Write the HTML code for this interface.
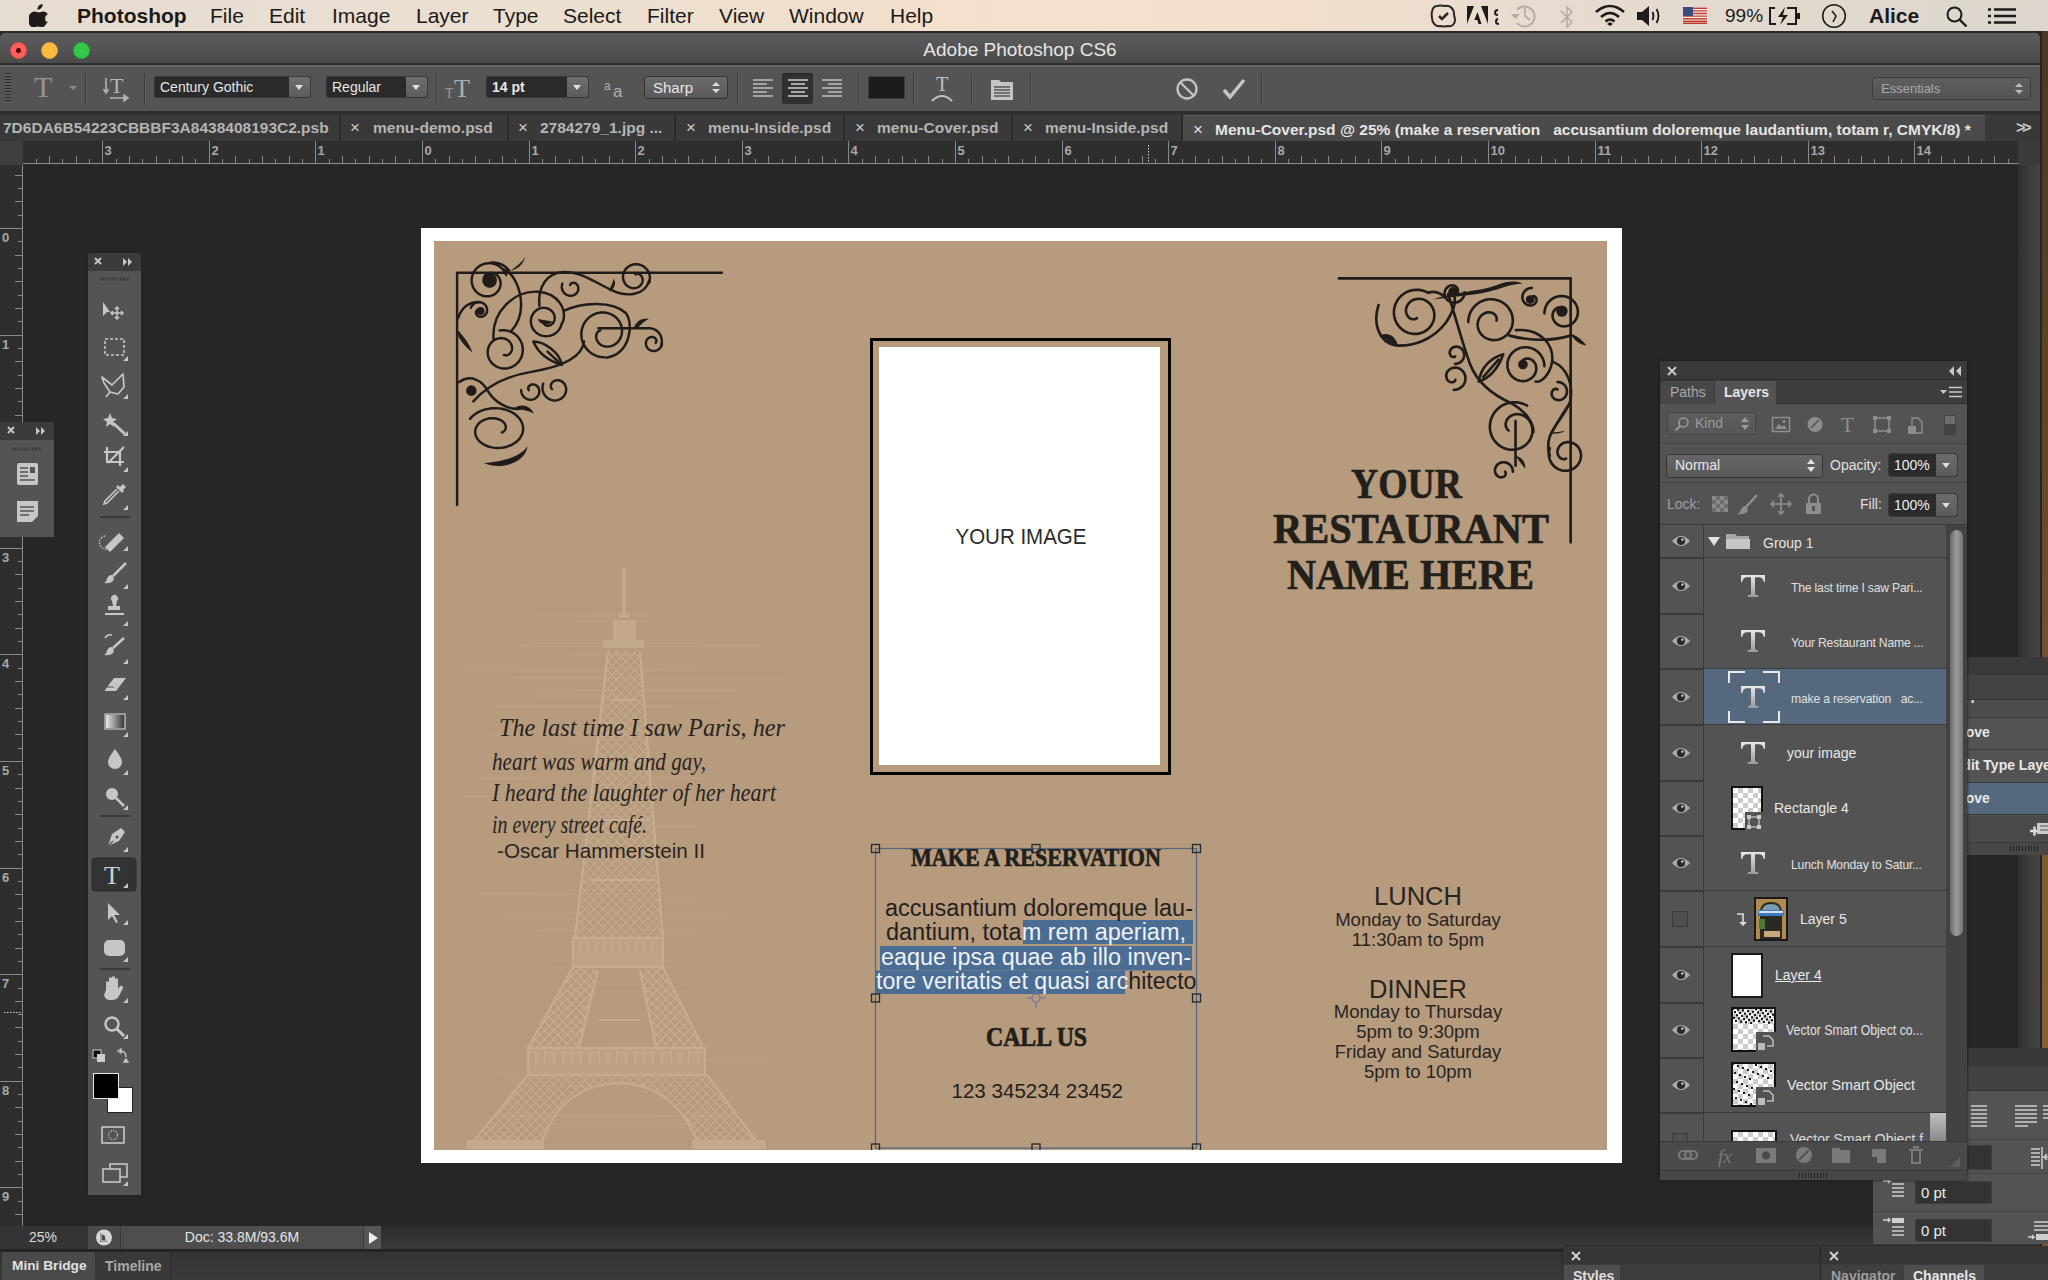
<!DOCTYPE html>
<html><head><meta charset="utf-8">
<style>
*{margin:0;padding:0;box-sizing:border-box}
html,body{width:2048px;height:1280px;overflow:hidden;background:#262626;font-family:"Liberation Sans",sans-serif}
.a{position:absolute}
#menubar{left:0;top:0;width:2048px;height:33px;background:linear-gradient(90deg,#e5dcd2 0%,#ebdfd1 25%,#f4e0cc 50%,#f3dfcc 62%,#e6dcd0 76%,#dcd6ce 100%);border-bottom:2px solid #2a2826}
#menubar span{position:absolute;top:4px;font-size:21px;color:#1c1a18;white-space:nowrap}
#titlebar{left:0;top:33px;width:2040px;height:31px;background:linear-gradient(#5d5d5d,#4a4a4a);border-top-left-radius:5px;border-top-right-radius:5px}
#optbar{left:0;top:63px;width:2040px;height:50px;background:#545454;border-top:2px solid #2c2c2c;border-bottom:2px solid #2e2e2e;box-shadow:inset 0 2px 0 #646464}
.sep{position:absolute;top:8px;width:2px;height:32px;border-left:1px solid #3c3c3c;border-right:1px solid #5e5e5e}
.fld{position:absolute;top:11px;height:22px;background:#2a2a2a;border:1px solid #3a3a3a;border-radius:2px;color:#e6e6e6;font-size:14px;line-height:20px;padding-left:5px;white-space:nowrap}
.fld .btn{position:absolute;right:0;top:0;width:21px;height:20px;background:linear-gradient(#6e6e6e,#5c5c5c);border-radius:0 2px 2px 0}
.fld .btn:after{content:"";position:absolute;left:6px;top:8px;border-left:4px solid transparent;border-right:4px solid transparent;border-top:5px solid #e0e0e0}
.ico{position:absolute}
#tabbar{left:0;top:113px;width:2040px;height:28px;background:#393939;border-top:1px solid #2a2a2a}
.tab{position:absolute;top:0;height:27px;background:#393939;border-right:2px solid #2a2a2a;color:#b4b4b4;font-weight:bold;font-size:15.5px;line-height:27px;white-space:nowrap;overflow:hidden}
.tab i{font-style:normal;position:absolute;top:0;font-weight:normal;font-size:17px;color:#c8c8c8}
#hruler{left:0;top:141px;width:2018px;height:24px;background:#2f2f2f}
#vruler{left:0;top:165px;width:23px;height:1061px;background:#2f2f2f}
#rightstrip{left:2018px;top:141px;width:22px;height:1110px;background:#3a3a3a}
#wood{left:2041px;top:31px;width:7px;height:1249px;background:linear-gradient(#4a3824,#5e4429 30%,#7a5631 60%,#8a6236 85%);border-left:1px solid #2a2018}
#statusbar{left:0;top:1226px;width:2040px;height:23px;background:linear-gradient(#2c2c2c,#363636)}
#bottombar{left:0;top:1249px;width:2040px;height:31px;background:linear-gradient(#333,#3a3a3a);border-top:3px solid #242424}
</style></head><body>
<div id="menubar" class="a">
<svg class="a" style="left:29px;top:4px" width="20" height="23" viewBox="0 0 20 23"><path d="M13.6 0c.2 1.6-.5 3.1-1.4 4.1-.9 1-2.3 1.8-3.7 1.7-.2-1.5.5-3.1 1.4-4 1-1 2.5-1.7 3.7-1.8zM18.8 16.9c-.6 1.3-.9 1.9-1.6 3-1.1 1.6-2.6 3.6-4.4 3.6-1.6 0-2.1-1.1-4.3-1-2.2 0-2.700 1.1-4.300 1.1-1.8 0-3.2-1.800-4.300-3.400C-3 15.900 .6 10.400 .8 10.300 1.900 8.600 3.700 7.500 5.400 7.500c1.900 0 3 1 4.500 1 1.500 0 2.400-1 4.500-1 1.600 0 3.300.9 4.500 2.400-4 2.200-3.300 7.900 0 9z" fill="#1e1b18"/></svg>
<span style="left:77px;font-weight:bold">Photoshop</span>
<span style="left:210px">File</span>
<span style="left:269px">Edit</span>
<span style="left:332px">Image</span>
<span style="left:416px">Layer</span>
<span style="left:493px">Type</span>
<span style="left:563px">Select</span>
<span style="left:647px">Filter</span>
<span style="left:719px">View</span>
<span style="left:789px">Window</span>
<span style="left:890px">Help</span>
<span style="left:1725px;font-size:19px;top:5px">99%</span>
<svg class="a" style="left:1430px;top:3px" width="28" height="26" viewBox="0 0 28 26"><path d="M7 3c3-1 6 0 8 0 4-1 9 2 9 8 0 2 1 4 1 6 0 4-3 7-7 6-3 1-6 0-8 0-4 1-8-3-8-8 0-2-1-4 0-6 0-3 2-6 5-6z" fill="none" stroke="#2a2622" stroke-width="2"/><path d="M9 13l3 3 6-6" stroke="#2a2622" stroke-width="2.6" fill="none"/></svg>
<svg class="a" style="left:1467px;top:5px" width="36" height="22" viewBox="0 0 36 22"><path d="M0 1h7L0 19z M21 1h-7l7 18z M10.5 7l4 12h-3l-1.2-4h-3z" fill="#1e1b18"/><path d="M31 5q-3 0-3 3 0 2 3 2" stroke="#1e1b18" stroke-width="2" fill="none"/><path d="M31 14q-2 0-2 3 0 2 3 2" stroke="#1e1b18" stroke-width="2" fill="none"/></svg>
<svg class="a" style="left:1509px;top:2px" width="30" height="28" viewBox="0 0 30 28"><path d="M8 8A10 10 0 1 1 8 21" stroke="#b5aca2" stroke-width="1.8" fill="none"/><path d="M2 12h9l-4.5 5z" fill="#b5aca2"/><path d="M16 6v8l5 4" stroke="#b5aca2" stroke-width="1.8" fill="none"/></svg>
<svg class="a" style="left:1558px;top:5px" width="18" height="24" viewBox="0 0 18 24"><path d="M3 6l11 11-5 5V2l5 5L3 18" stroke="#b5aca2" stroke-width="1.5" fill="none"/></svg>
<svg class="a" style="left:1594px;top:4px" width="32" height="23" viewBox="0 0 32 23"><path d="M2 8q14-12 28 0" stroke="#1e1b18" stroke-width="2.6" fill="none"/><path d="M7 13q9-8 18 0" stroke="#1e1b18" stroke-width="2.6" fill="none"/><path d="M11.5 17.5q4.5-4 9 0" stroke="#1e1b18" stroke-width="2.6" fill="none"/><path d="M13 20l3-2 3 2-3 2z" fill="#1e1b18"/></svg>
<svg class="a" style="left:1637px;top:6px" width="26" height="20" viewBox="0 0 26 20"><path d="M0 6h5l7-6v20l-7-6H0z" fill="#1e1b18"/><path d="M15.5 6q2 4 0 8M19.5 3q4 7 0 14" stroke="#1e1b18" stroke-width="1.8" fill="none"/></svg>
<svg class="a" style="left:1683px;top:7px" width="24" height="17" viewBox="0 0 24 17"><rect width="24" height="17" fill="#f4f4f4"/><path d="M0 1.3h24M0 3.9h24M0 6.5h24M0 9.1h24M0 11.7h24M0 14.3h24M0 16.3h24" stroke="#c0392b" stroke-width="1.4"/><rect width="10" height="9" fill="#3c4a7e"/></svg>
<svg class="a" style="left:1768px;top:6px" width="34" height="20" viewBox="0 0 34 20"><path d="M7 2H2v16h6M19 2h9v16h-9" stroke="#1e1b18" stroke-width="2" fill="none"/><rect x="29" y="7" width="3" height="6" fill="#1e1b18"/><path d="M17 1l-7 10h5l-3 8 8-10h-5z" fill="#1e1b18"/></svg>
<svg class="a" style="left:1821px;top:3px" width="26" height="26" viewBox="0 0 26 26"><circle cx="13" cy="13" r="11.3" stroke="#1e1b18" stroke-width="1.6" fill="none"/><path d="M11 8l4 5-3 6" stroke="#1e1b18" stroke-width="1.6" fill="none"/></svg>
<svg class="a" style="left:1945px;top:5px" width="24" height="24" viewBox="0 0 24 24"><circle cx="9.5" cy="9.5" r="7" stroke="#1e1b18" stroke-width="2" fill="none"/><path d="M14.5 14.5l7 7" stroke="#1e1b18" stroke-width="2.4"/></svg>
<svg class="a" style="left:1988px;top:8px" width="28" height="16" viewBox="0 0 28 16"><path d="M0 1.5h3M0 8h3M0 14.5h3M6 1.5h22M6 8h22M6 14.5h22" stroke="#1e1b18" stroke-width="2.6"/></svg>
<span style="left:1869px;font-weight:bold">Alice</span>
</div>
<div id="titlebar" class="a">
<div class="a" style="left:10px;top:9px;width:17px;height:17px;border-radius:50%;background:#fc615d;border:1px solid #df4a45"><div class="a" style="left:5px;top:5px;width:5px;height:5px;border-radius:50%;background:#4d0000"></div></div>
<div class="a" style="left:41px;top:9px;width:17px;height:17px;border-radius:50%;background:#fdbc40;border:1px solid #de9f34"></div>
<div class="a" style="left:73px;top:9px;width:17px;height:17px;border-radius:50%;background:#34c84a;border:1px solid #27aa35"></div>
<div class="a" style="left:0;top:6px;width:2040px;text-align:center;font-size:19px;color:#e6e6e6">Adobe Photoshop CS6</div>
</div>
<div id="optbar" class="a">
<div class="a" style="left:5px;top:8px;width:6px;height:30px;background:repeating-linear-gradient(#2a2a2a 0 1px,#5a5a5a 1px 3px)"></div>
<div class="ico" style="left:34px;top:5px;font-family:'Liberation Serif',serif;font-size:30px;color:#959595">T</div>
<div class="a" style="left:69px;top:21px;border-left:4px solid transparent;border-right:4px solid transparent;border-top:4px solid #8a8a8a"></div>
<div class="sep" style="left:85px"></div>
<svg class="ico" style="left:102px;top:11px" width="28" height="26" viewBox="0 0 28 26"><text x="8" y="17" font-family="Liberation Serif" font-size="22" fill="#b5b5b5">T</text><path d="M4 2v14M1.5 13l2.5 4 2.5-4" stroke="#b5b5b5" stroke-width="1.5" fill="none"/><path d="M8 22h17M22 19l4 3-4 3z" stroke="#b5b5b5" stroke-width="1.5" fill="#b5b5b5"/></svg>
<div class="sep" style="left:144px"></div>
<div class="fld" style="left:154px;width:157px">Century Gothic<div class="btn"></div></div>
<div class="fld" style="left:326px;width:102px">Regular<div class="btn"></div></div>
<div class="sep" style="left:436px"></div>
<svg class="ico" style="left:445px;top:11px" width="30" height="26" viewBox="0 0 30 26"><text x="0" y="22" font-family="Liberation Serif" font-size="14" fill="#9a9a9a">T</text><text x="9" y="21" font-family="Liberation Serif" font-size="26" fill="#b0b0b0">T</text></svg>
<div class="fld" style="left:486px;width:103px;font-weight:bold">14 pt<div class="btn"></div></div>
<svg class="ico" style="left:603px;top:12px" width="26" height="24" viewBox="0 0 26 24"><text x="1" y="13" font-family="Liberation Sans" font-size="12" fill="#b0b0b0">a</text><text x="10" y="20" font-family="Liberation Sans" font-size="17" fill="#b0b0b0">a</text></svg>
<div class="a" style="left:644px;top:11px;width:84px;height:23px;background:linear-gradient(#6a6a6a,#5a5a5a);border:1px solid #333;border-radius:3px;color:#e8e8e8;font-size:15px;line-height:21px;padding-left:8px">Sharp<div class="a" style="left:67px;top:5px;border-left:4px solid transparent;border-right:4px solid transparent;border-bottom:4px solid #ddd"></div><div class="a" style="left:67px;top:12px;border-left:4px solid transparent;border-right:4px solid transparent;border-top:4px solid #ddd"></div></div>
<div class="sep" style="left:737px"></div>
<svg class="ico" style="left:752px;top:13px" width="22" height="20" viewBox="0 0 22 20"><path d="M1 2h20M1 6h14M1 10h20M1 14h14M1 18h20" stroke="#bdbdbd" stroke-width="1.6"/></svg>
<div class="a" style="left:782px;top:8px;width:31px;height:31px;background:#323232;border-radius:3px;box-shadow:inset 0 1px 2px #222"></div>
<svg class="ico" style="left:787px;top:13px" width="22" height="20" viewBox="0 0 22 20"><path d="M1 2h20M4 6h14M1 10h20M4 14h14M1 18h20" stroke="#d0d0d0" stroke-width="1.6"/></svg>
<svg class="ico" style="left:821px;top:13px" width="22" height="20" viewBox="0 0 22 20"><path d="M1 2h20M7 6h14M1 10h20M7 14h14M1 18h20" stroke="#bdbdbd" stroke-width="1.6"/></svg>
<div class="sep" style="left:858px"></div>
<div class="a" style="left:868px;top:11px;width:37px;height:23px;background:#1b1b1b;border:1px solid #3d3d3d"></div>
<div class="sep" style="left:913px"></div>
<svg class="ico" style="left:929px;top:8px" width="26" height="30" viewBox="0 0 26 30"><text x="7" y="18" font-family="Liberation Serif" font-size="20" fill="#c0c0c0">T</text><path d="M3 28q10-10 20 0" stroke="#c0c0c0" stroke-width="2" fill="none"/></svg>
<div class="sep" style="left:971px"></div>
<svg class="ico" style="left:989px;top:12px" width="26" height="24" viewBox="0 0 26 24"><path d="M2 3h8l2 2h12v18H2z" fill="#c4c4c4"/><path d="M5 10h16M5 13h16M5 16h16M5 19h16" stroke="#555" stroke-width="1.3"/></svg>
<div class="sep" style="left:1030px"></div>
<svg class="ico" style="left:1174px;top:11px" width="26" height="26" viewBox="0 0 26 26"><circle cx="13" cy="13" r="9.5" stroke="#c4c4c4" stroke-width="2.3" fill="none"/><path d="M6.5 6.5l13 13" stroke="#c4c4c4" stroke-width="2.3"/></svg>
<svg class="ico" style="left:1220px;top:11px" width="28" height="26" viewBox="0 0 28 26"><path d="M4 14l6 7L24 4" stroke="#c4c4c4" stroke-width="3.5" fill="none"/></svg>
<div class="sep" style="left:1261px"></div>
<div class="a" style="left:1872px;top:12px;width:159px;height:23px;background:linear-gradient(#5e5e5e,#545454);border:1px solid #3c3c3c;border-radius:3px;color:#aaa;font-size:13px;line-height:21px;padding-left:8px">Essentials<div class="a" style="left:142px;top:5px;border-left:4px solid transparent;border-right:4px solid transparent;border-bottom:4px solid #bbb"></div><div class="a" style="left:142px;top:12px;border-left:4px solid transparent;border-right:4px solid transparent;border-top:4px solid #bbb"></div></div>
</div>
<div id="tabbar" class="a">
<div class="tab" style="left:0;width:341px"><span class="a" style="left:3px">7D6DA6B54223CBBBF3A8438408193C2.psb</span></div>
<div class="tab" style="left:341px;width:168px"><i style="left:9px">×</i><span class="a" style="left:32px">menu-demo.psd</span></div>
<div class="tab" style="left:509px;width:167px"><i style="left:9px">×</i><span class="a" style="left:31px">2784279_1.jpg ...</span></div>
<div class="tab" style="left:676px;width:169px"><i style="left:10px">×</i><span class="a" style="left:32px">menu-Inside.psd</span></div>
<div class="tab" style="left:845px;width:168px"><i style="left:10px">×</i><span class="a" style="left:32px">menu-Cover.psd</span></div>
<div class="tab" style="left:1013px;width:170px"><i style="left:10px">×</i><span class="a" style="left:32px">menu-Inside.psd</span></div>
<div class="tab" style="left:1183px;width:802px;background:#4b4b4b;color:#e4e4e4;border-right:none;top:1px;border-top:1px solid #5a5a5a"><i style="left:10px;color:#e0e0e0">×</i><span class="a" style="left:32px">Menu-Cover.psd @ 25% (make a reservation &nbsp; accusantium doloremque laudantium, totam r, CMYK/8) *</span></div>
<div class="a" style="left:2016px;top:0;color:#c8c8c8;font-size:16px;line-height:28px;font-weight:bold;letter-spacing:-3px">&gt;&gt;</div>
</div>
<svg class="a" style="left:0;top:141px" width="2018" height="24" viewBox="0 0 2018 24">
<rect x="0" y="0" width="2018" height="24" fill="#2e2e2e"/>
<rect x="0" y="0" width="23" height="24" fill="#3e3e3e"/>
<rect x="23" y="22" width="1995" height="1" fill="#8a8a8a"/>
<path d="M36.5 18V22M49.5 15V22M62.5 18V22M76.5 15V22M89.5 18V22M102.5 0V22M116.5 18V22M129.5 15V22M142.5 18V22M156.5 15V22M169.5 18V22M182.5 15V22M195.5 18V22M209.5 0V22M222.5 18V22M235.5 15V22M249.5 18V22M262.5 15V22M275.5 18V22M289.5 15V22M302.5 18V22M315.5 0V22M329.5 18V22M342.5 15V22M355.5 18V22M369.5 15V22M382.5 18V22M395.5 15V22M409.5 18V22M422.5 0V22M435.5 18V22M449.5 15V22M462.5 18V22M475.5 15V22M489.5 18V22M502.5 15V22M515.5 18V22M529.5 0V22M542.5 18V22M555.5 15V22M569.5 18V22M582.5 15V22M595.5 18V22M609.5 15V22M622.5 18V22M635.5 0V22M649.5 18V22M662.5 15V22M675.5 18V22M688.5 15V22M702.5 18V22M715.5 15V22M728.5 18V22M742.5 0V22M755.5 18V22M768.5 15V22M782.5 18V22M795.5 15V22M808.5 18V22M822.5 15V22M835.5 18V22M848.5 0V22M862.5 18V22M875.5 15V22M888.5 18V22M902.5 15V22M915.5 18V22M928.5 15V22M942.5 18V22M955.5 0V22M968.5 18V22M982.5 15V22M995.5 18V22M1008.5 15V22M1022.5 18V22M1035.5 15V22M1048.5 18V22M1062.5 0V22M1075.5 18V22M1088.5 15V22M1102.5 18V22M1115.5 15V22M1128.5 18V22M1142.5 15V22M1155.5 18V22M1168.5 0V22M1182.5 18V22M1195.5 15V22M1208.5 18V22M1222.5 15V22M1235.5 18V22M1248.5 15V22M1261.5 18V22M1275.5 0V22M1288.5 18V22M1301.5 15V22M1315.5 18V22M1328.5 15V22M1341.5 18V22M1355.5 15V22M1368.5 18V22M1381.5 0V22M1395.5 18V22M1408.5 15V22M1421.5 18V22M1435.5 15V22M1448.5 18V22M1461.5 15V22M1475.5 18V22M1488.5 0V22M1501.5 18V22M1515.5 15V22M1528.5 18V22M1541.5 15V22M1555.5 18V22M1568.5 15V22M1581.5 18V22M1595.5 0V22M1608.5 18V22M1621.5 15V22M1635.5 18V22M1648.5 15V22M1661.5 18V22M1675.5 15V22M1688.5 18V22M1701.5 0V22M1715.5 18V22M1728.5 15V22M1741.5 18V22M1754.5 15V22M1768.5 18V22M1781.5 15V22M1794.5 18V22M1808.5 0V22M1821.5 18V22M1834.5 15V22M1848.5 18V22M1861.5 15V22M1874.5 18V22M1888.5 15V22M1901.5 18V22M1914.5 0V22M1928.5 18V22M1941.5 15V22M1954.5 18V22M1968.5 15V22M1981.5 18V22M1994.5 15V22M2008.5 18V22" stroke="#8a8a8a" stroke-width="1"/>
<text x="104.5" y="14" font-size="13" font-weight="bold" fill="#a8a8a8" font-family="Liberation Sans">3</text>
<text x="211.5" y="14" font-size="13" font-weight="bold" fill="#a8a8a8" font-family="Liberation Sans">2</text>
<text x="317.5" y="14" font-size="13" font-weight="bold" fill="#a8a8a8" font-family="Liberation Sans">1</text>
<text x="424.5" y="14" font-size="13" font-weight="bold" fill="#a8a8a8" font-family="Liberation Sans">0</text>
<text x="531.5" y="14" font-size="13" font-weight="bold" fill="#a8a8a8" font-family="Liberation Sans">1</text>
<text x="637.5" y="14" font-size="13" font-weight="bold" fill="#a8a8a8" font-family="Liberation Sans">2</text>
<text x="744.5" y="14" font-size="13" font-weight="bold" fill="#a8a8a8" font-family="Liberation Sans">3</text>
<text x="850.5" y="14" font-size="13" font-weight="bold" fill="#a8a8a8" font-family="Liberation Sans">4</text>
<text x="957.5" y="14" font-size="13" font-weight="bold" fill="#a8a8a8" font-family="Liberation Sans">5</text>
<text x="1064.5" y="14" font-size="13" font-weight="bold" fill="#a8a8a8" font-family="Liberation Sans">6</text>
<text x="1170.5" y="14" font-size="13" font-weight="bold" fill="#a8a8a8" font-family="Liberation Sans">7</text>
<text x="1277.5" y="14" font-size="13" font-weight="bold" fill="#a8a8a8" font-family="Liberation Sans">8</text>
<text x="1383.5" y="14" font-size="13" font-weight="bold" fill="#a8a8a8" font-family="Liberation Sans">9</text>
<text x="1490.5" y="14" font-size="13" font-weight="bold" fill="#a8a8a8" font-family="Liberation Sans">10</text>
<text x="1597.5" y="14" font-size="13" font-weight="bold" fill="#a8a8a8" font-family="Liberation Sans">11</text>
<text x="1703.5" y="14" font-size="13" font-weight="bold" fill="#a8a8a8" font-family="Liberation Sans">12</text>
<text x="1810.5" y="14" font-size="13" font-weight="bold" fill="#a8a8a8" font-family="Liberation Sans">13</text>
<text x="1916.5" y="14" font-size="13" font-weight="bold" fill="#a8a8a8" font-family="Liberation Sans">14</text>
<path d="M1148.5 4V22" stroke="#cfcfcf" stroke-width="1" stroke-dasharray="1.5 1.5"/>
</svg>
<svg class="a" style="left:0;top:165px" width="23" height="1061" viewBox="0 0 23 1061">
<rect x="0" y="0" width="23" height="1061" fill="#2e2e2e"/>
<rect x="22" y="0" width="1" height="1061" fill="#8a8a8a"/>
<path d="M15 10.5H22M18 23.5H22M15 36.5H22M18 50.5H22M0 63.5H22M18 76.5H22M15 90.5H22M18 103.5H22M15 116.5H22M18 130.5H22M15 143.5H22M18 156.5H22M0 170.5H22M18 183.5H22M15 196.5H22M18 210.5H22M15 223.5H22M18 236.5H22M15 250.5H22M18 263.5H22M0 276.5H22M18 290.5H22M15 303.5H22M18 316.5H22M15 330.5H22M18 343.5H22M15 356.5H22M18 369.5H22M0 383.5H22M18 396.5H22M15 409.5H22M18 423.5H22M15 436.5H22M18 449.5H22M15 463.5H22M18 476.5H22M0 489.5H22M18 503.5H22M15 516.5H22M18 529.5H22M15 543.5H22M18 556.5H22M15 569.5H22M18 583.5H22M0 596.5H22M18 609.5H22M15 623.5H22M18 636.5H22M15 649.5H22M18 663.5H22M15 676.5H22M18 689.5H22M0 703.5H22M18 716.5H22M15 729.5H22M18 743.5H22M15 756.5H22M18 769.5H22M15 783.5H22M18 796.5H22M0 809.5H22M18 823.5H22M15 836.5H22M18 849.5H22M15 862.5H22M18 876.5H22M15 889.5H22M18 902.5H22M0 916.5H22M18 929.5H22M15 942.5H22M18 956.5H22M15 969.5H22M18 982.5H22M15 996.5H22M18 1009.5H22M0 1022.5H22M18 1036.5H22M15 1049.5H22" stroke="#8a8a8a" stroke-width="1"/>
<text x="2" y="76.5" font-size="13" font-weight="bold" fill="#a8a8a8" font-family="Liberation Sans">0</text>
<text x="2" y="183.5" font-size="13" font-weight="bold" fill="#a8a8a8" font-family="Liberation Sans">1</text>
<text x="2" y="289.5" font-size="13" font-weight="bold" fill="#a8a8a8" font-family="Liberation Sans">2</text>
<text x="2" y="396.5" font-size="13" font-weight="bold" fill="#a8a8a8" font-family="Liberation Sans">3</text>
<text x="2" y="502.5" font-size="13" font-weight="bold" fill="#a8a8a8" font-family="Liberation Sans">4</text>
<text x="2" y="609.5" font-size="13" font-weight="bold" fill="#a8a8a8" font-family="Liberation Sans">5</text>
<text x="2" y="716.5" font-size="13" font-weight="bold" fill="#a8a8a8" font-family="Liberation Sans">6</text>
<text x="2" y="822.5" font-size="13" font-weight="bold" fill="#a8a8a8" font-family="Liberation Sans">7</text>
<text x="2" y="929.5" font-size="13" font-weight="bold" fill="#a8a8a8" font-family="Liberation Sans">8</text>
<text x="2" y="1035.5" font-size="13" font-weight="bold" fill="#a8a8a8" font-family="Liberation Sans">9</text>
<path d="M4 847.5H22" stroke="#cfcfcf" stroke-width="1" stroke-dasharray="1.5 1.5"/>
</svg>
<div id="rightstrip" class="a"></div>
<div id="wood" class="a"></div>

<!-- document -->
<div class="a" style="left:421px;top:228px;width:1201px;height:935px;background:#fff"></div>
<div class="a" style="left:434px;top:241px;width:1173px;height:909px;background:#b69b7e"></div>
<!--EIF-->
<svg class="a" style="left:434px;top:241px" width="1173" height="922" viewBox="434 241 1173 922">
<defs>
<pattern id="xh" width="9" height="9" patternUnits="userSpaceOnUse"><path d="M0 0L9 9M9 0L0 9" stroke="#c7ae92" stroke-width="1.2"/></pattern>
<linearGradient id="streak" x1="0" y1="0" x2="1" y2="0"><stop offset="0" stop-color="#c2a88b" stop-opacity="0"/><stop offset="0.5" stop-color="#c2a88b" stop-opacity="0.35"/><stop offset="1" stop-color="#c2a88b" stop-opacity="0"/></linearGradient>
</defs>
<g><path d="M483 774.9h190" stroke="#c9b196" stroke-width="1" opacity="0.13"/><path d="M568 889.4h72" stroke="#c9b196" stroke-width="1" opacity="0.21"/><path d="M575 620.2h74" stroke="#c9b196" stroke-width="1" opacity="0.14"/><path d="M617 829.2h85" stroke="#c9b196" stroke-width="1" opacity="0.16"/><path d="M586 938.8h175" stroke="#c9b196" stroke-width="1" opacity="0.19"/><path d="M450 1127.2h232" stroke="#c9b196" stroke-width="1" opacity="0.17"/><path d="M513 677.9h122" stroke="#c9b196" stroke-width="1" opacity="0.27"/><path d="M536 697.6h188" stroke="#c9b196" stroke-width="1" opacity="0.19"/><path d="M532 895.8h72" stroke="#c9b196" stroke-width="1" opacity="0.16"/><path d="M550 967.4h123" stroke="#c9b196" stroke-width="1" opacity="0.23"/><path d="M487 844.7h219" stroke="#c9b196" stroke-width="1" opacity="0.25"/><path d="M546 731.8h165" stroke="#c9b196" stroke-width="1" opacity="0.28"/><path d="M467 993.9h256" stroke="#c9b196" stroke-width="1" opacity="0.14"/><path d="M606 825.8h90" stroke="#c9b196" stroke-width="1" opacity="0.21"/><path d="M534 621.2h213" stroke="#c9b196" stroke-width="1" opacity="0.22"/><path d="M498 1072.8h199" stroke="#c9b196" stroke-width="1" opacity="0.23"/><path d="M501 913.1h228" stroke="#c9b196" stroke-width="1" opacity="0.29"/><path d="M604 856.0h72" stroke="#c9b196" stroke-width="1" opacity="0.25"/><path d="M567 949.4h224" stroke="#c9b196" stroke-width="1" opacity="0.17"/><path d="M608 808.3h65" stroke="#c9b196" stroke-width="1" opacity="0.20"/><path d="M538 690.7h72" stroke="#c9b196" stroke-width="1" opacity="0.26"/><path d="M521 669.8h138" stroke="#c9b196" stroke-width="1" opacity="0.28"/><path d="M529 643.5h170" stroke="#c9b196" stroke-width="1" opacity="0.28"/><path d="M606 1042.4h116" stroke="#c9b196" stroke-width="1" opacity="0.19"/><path d="M540 793.7h252" stroke="#c9b196" stroke-width="1" opacity="0.15"/><path d="M535 695.2h107" stroke="#c9b196" stroke-width="1" opacity="0.21"/><path d="M561 918.1h61" stroke="#c9b196" stroke-width="1" opacity="0.20"/><path d="M503 799.4h251" stroke="#c9b196" stroke-width="1" opacity="0.24"/><path d="M536 878.4h195" stroke="#c9b196" stroke-width="1" opacity="0.13"/><path d="M536 1085.7h235" stroke="#c9b196" stroke-width="1" opacity="0.26"/><path d="M568 811.9h81" stroke="#c9b196" stroke-width="1" opacity="0.23"/><path d="M517 633.6h102" stroke="#c9b196" stroke-width="1" opacity="0.15"/><path d="M536 783.6h60" stroke="#c9b196" stroke-width="1" opacity="0.15"/><path d="M571 654.8h65" stroke="#c9b196" stroke-width="1" opacity="0.28"/><path d="M523 931.6h110" stroke="#c9b196" stroke-width="1" opacity="0.18"/><path d="M460 796.6h230" stroke="#c9b196" stroke-width="1" opacity="0.30"/><path d="M579 851.6h77" stroke="#c9b196" stroke-width="1" opacity="0.14"/><path d="M479 785.0h226" stroke="#c9b196" stroke-width="1" opacity="0.15"/><path d="M591 612.5h166" stroke="#c9b196" stroke-width="1" opacity="0.15"/><path d="M480 893.3h166" stroke="#c9b196" stroke-width="1" opacity="0.30"/><path d="M587 1066.2h112" stroke="#c9b196" stroke-width="1" opacity="0.19"/><path d="M569 690.2h167" stroke="#c9b196" stroke-width="1" opacity="0.26"/><path d="M476 778.0h222" stroke="#c9b196" stroke-width="1" opacity="0.30"/><path d="M545 1060.4h224" stroke="#c9b196" stroke-width="1" opacity="0.25"/><path d="M557 722.4h131" stroke="#c9b196" stroke-width="1" opacity="0.13"/><path d="M538 615.1h112" stroke="#c9b196" stroke-width="1" opacity="0.24"/><path d="M490 1116.5h247" stroke="#c9b196" stroke-width="1" opacity="0.30"/><path d="M552 1115.7h104" stroke="#c9b196" stroke-width="1" opacity="0.16"/><path d="M492 706.2h185" stroke="#c9b196" stroke-width="1" opacity="0.28"/><path d="M522 1053.8h191" stroke="#c9b196" stroke-width="1" opacity="0.26"/><path d="M518 645.8h242" stroke="#c9b196" stroke-width="1" opacity="0.26"/><path d="M570 1005.1h96" stroke="#c9b196" stroke-width="1" opacity="0.26"/><path d="M529 779.6h254" stroke="#c9b196" stroke-width="1" opacity="0.19"/><path d="M571 816.7h205" stroke="#c9b196" stroke-width="1" opacity="0.15"/><path d="M458 668.6h241" stroke="#c9b196" stroke-width="1" opacity="0.27"/><path d="M531 678.9h256" stroke="#c9b196" stroke-width="1" opacity="0.24"/><path d="M583 789.2h86" stroke="#c9b196" stroke-width="1" opacity="0.12"/><path d="M555 1124.3h165" stroke="#c9b196" stroke-width="1" opacity="0.29"/><path d="M552 834.3h225" stroke="#c9b196" stroke-width="1" opacity="0.16"/><path d="M541 736.0h108" stroke="#c9b196" stroke-width="1" opacity="0.23"/><path d="M567 740.1h86" stroke="#c9b196" stroke-width="1" opacity="0.28"/><path d="M527 791.0h177" stroke="#c9b196" stroke-width="1" opacity="0.28"/><path d="M590 827.1h160" stroke="#c9b196" stroke-width="1" opacity="0.22"/><path d="M488 882.7h148" stroke="#c9b196" stroke-width="1" opacity="0.15"/><path d="M609 602.1h94" stroke="#c9b196" stroke-width="1" opacity="0.21"/><path d="M564 991.6h125" stroke="#c9b196" stroke-width="1" opacity="0.21"/><path d="M614 899.9h81" stroke="#c9b196" stroke-width="1" opacity="0.22"/><path d="M486 734.2h214" stroke="#c9b196" stroke-width="1" opacity="0.21"/><path d="M530 903.3h242" stroke="#c9b196" stroke-width="1" opacity="0.20"/><path d="M539 930.8h162" stroke="#c9b196" stroke-width="1" opacity="0.24"/></g>
<g fill="none" stroke="#c6ad91" stroke-width="2.2" stroke-linejoin="round">
<!-- antenna + top -->
<path d="M624 568V614" stroke-width="2.5"/>
<path d="M619 614h10v4h-10z M613 620h23v22h-23z" fill="#c3aa8d" stroke="none"/>
<path d="M603 640h41v8h-41z" fill="#c3aa8d" stroke="none"/>
<!-- upper shaft -->
<path d="M608 651L575 938M640 651L663 938"/>
<path d="M608 651L575 938L663 938L640 651z" fill="url(#xh)" stroke="none" opacity="0.8"/>
<path d="M612 700h26M606 760h39M598 820h52M590 880h64"/>
<!-- second platform -->
<path d="M573 938h90v29h-90z" fill="#c3aa8d" fill-opacity="0.5"/>
<path d="M580 942v12M588 942v12M596 942v12M604 942v12M612 942v12M620 942v12M628 942v12M636 942v12M644 942v12M652 942v12" stroke-width="1.5"/>
<!-- middle legs -->
<path d="M573 967L528 1048M663 967L703 1048M598 970L579 1048M640 970L656 1048"/>
<path d="M573 967L528 1048L579 1048L598 970z M663 967L703 1048L656 1048L640 970z" fill="url(#xh)" stroke="none"/>
<path d="M598 1020h42" stroke-width="1.5"/>
<!-- first platform -->
<path d="M528 1048h177v27h-177z" fill="#c3aa8d" fill-opacity="0.5"/>
<path d="M536 1051v13M545 1051v13M554 1051v13M563 1051v13M572 1051v13M581 1051v13M590 1051v13M599 1051v13M608 1051v13M617 1051v13M626 1051v13M635 1051v13M644 1051v13M653 1051v13M662 1051v13M671 1051v13M680 1051v13M689 1051v13M698 1051v13" stroke-width="1.5"/>
<!-- bottom legs + arch -->
<path d="M528 1075L469 1147M707 1075L762 1149"/>
<path d="M540 1147Q560 1085 619 1083Q678 1085 700 1149"/>
<path d="M528 1075L469 1147L540 1147Q560 1085 619 1083Q678 1085 700 1149L762 1149L707 1075z" fill="url(#xh)" stroke="none" opacity="0.85"/>
<path d="M466 1140h78v9h-78z M692 1140h74v9h-74z" fill="#c3aa8d" stroke="none"/>
</g>
</svg>

<!--/EIF-->
<!--DOC-->
<!-- photo frame -->
<div class="a" style="left:870px;top:338px;width:301px;height:437px;border:3px solid #050505"></div>
<div class="a" style="left:879px;top:347px;width:281px;height:418px;background:#fff"></div>
<svg class="a" style="left:434px;top:241px" width="1173" height="909" viewBox="434 241 1173 909">
<text x="1021" y="544" text-anchor="middle" font-family="Liberation Sans" font-size="21.5" fill="#2b2b2b" textLength="131" lengthAdjust="spacingAndGlyphs">YOUR IMAGE</text>
<g font-family="Liberation Serif" font-weight="bold" fill="#231f1b" stroke="#231f1b" stroke-width="0.7">
<text x="1351" y="498" font-size="42" textLength="111" lengthAdjust="spacingAndGlyphs">YOUR</text>
<text x="1273" y="543" font-size="42" textLength="276" lengthAdjust="spacingAndGlyphs">RESTAURANT</text>
<text x="1287" y="589" font-size="42" textLength="247" lengthAdjust="spacingAndGlyphs">NAME HERE</text>
</g>
<g font-family="Liberation Sans" fill="#2a2420" text-anchor="middle">
<text x="1418" y="905" font-size="25.5">LUNCH</text>
<text x="1418" y="925.5" font-size="18.5">Monday to Saturday</text>
<text x="1418" y="946" font-size="18.5">11:30am to 5pm</text>
<text x="1418" y="998" font-size="25.5">DINNER</text>
<text x="1418" y="1018" font-size="18.5">Monday to Thursday</text>
<text x="1418" y="1038" font-size="18.5">5pm to 9:30pm</text>
<text x="1418" y="1058" font-size="18.5">Friday and Saturday</text>
<text x="1418" y="1078" font-size="18.5">5pm to 10pm</text>
</g>
<!-- quote -->
<g font-family="Liberation Serif" font-style="italic" fill="#2a2420">
<text x="499" y="736" font-size="25" textLength="286" lengthAdjust="spacingAndGlyphs">The last time I saw Paris, her</text>
<text x="492" y="770" font-size="25" textLength="214" lengthAdjust="spacingAndGlyphs">heart was warm and gay,</text>
<text x="492" y="801" font-size="25" textLength="284" lengthAdjust="spacingAndGlyphs">I heard the laughter of her heart</text>
<text x="492" y="833" font-size="25" textLength="155" lengthAdjust="spacingAndGlyphs">in every street café.</text>
</g>
<text x="497" y="858" font-family="Liberation Sans" font-size="20.7" fill="#2a2420" textLength="208" lengthAdjust="spacingAndGlyphs">-Oscar Hammerstein II</text>
<!-- text box -->
<g font-family="Liberation Serif" font-weight="bold" fill="#231f1b" stroke="#231f1b" stroke-width="0.7">
<text x="911" y="866" font-size="26" textLength="250" lengthAdjust="spacingAndGlyphs">MAKE A RESERVATION</text>
<text x="986" y="1046" font-size="26.5" textLength="101" lengthAdjust="spacingAndGlyphs">CALL US</text>
</g>
<rect x="1023" y="920" width="170" height="24" fill="#4b6d94"/>
<rect x="880" y="946" width="312" height="24.5" fill="#4b6d94"/>
<rect x="875" y="970.5" width="250" height="23.5" fill="#4b6d94"/>
<g font-family="Liberation Sans" font-size="23.5" fill="#25201c">
<text x="885" y="916" textLength="308" lengthAdjust="spacingAndGlyphs">accusantium doloremque lau-</text>
<text x="886" y="939.5" textLength="300" lengthAdjust="spacingAndGlyphs">dantium, tota<tspan fill="#eef2f6">m rem aperiam,</tspan></text>
<text x="881" y="965" textLength="310" lengthAdjust="spacingAndGlyphs" fill="#eef2f6">eaque ipsa quae ab illo inven-</text>
<text x="876" y="988.5" textLength="320.5" lengthAdjust="spacingAndGlyphs"><tspan fill="#eef2f6">tore veritatis et quasi arc</tspan>hitecto</text>
</g>
<text x="951.5" y="1097.5" font-family="Liberation Sans" font-size="20.5" fill="#25201c" textLength="171.5" lengthAdjust="spacingAndGlyphs">123 345234 23452</text>
<!-- bounding box -->
<g fill="none" stroke="#56657a" stroke-width="1.2">
<rect x="875.5" y="848.5" width="321" height="299.5"/>
</g>
<g fill="none" stroke="#1e2a38" stroke-width="1.3">
<rect x="871.5" y="844.5" width="8" height="8"/><rect x="1032" y="844.5" width="8" height="8"/><rect x="1192.5" y="844.5" width="8" height="8"/>
<rect x="871.5" y="994" width="8" height="8"/><rect x="1192.5" y="994" width="8" height="8"/>
<rect x="871.5" y="1144" width="8" height="8"/><rect x="1032" y="1144" width="8" height="8"/><rect x="1192.5" y="1144" width="8" height="8"/>
</g>
<g fill="none" stroke="#6a7c92" stroke-width="1.2">
<circle cx="1036" cy="998" r="4"/><path d="M1026 998h6M1040 998h6M1036 988v6M1036 1002v6"/>
</g>
</svg>

<!--/DOC-->
<!--ORN-->
<svg class="a" style="left:450px;top:250px" width="280" height="260.1" viewBox="0 0 1378 1280">
<g fill="none" stroke="#1f1c19" stroke-width="12" stroke-linecap="round" stroke-linejoin="round">
<path d="M35 1255 V112 H1338"/>
<path d="M276.5 123.5 L272.7 114.7 L268.0 106.3 L262.4 98.5 L256.0 91.3 L248.9 84.8 L241.1 79.2 L232.8 74.5 L224.1 70.6 L215.0 67.7 L205.7 65.9 L196.3 65.0 L186.9 65.1 L177.5 66.2 L168.4 68.4 L159.6 71.4 L151.2 75.4 L143.3 80.2 L136.0 85.9 L129.4 92.2 L123.5 99.2 L118.4 106.7 L114.2 114.7 L110.9 123.0 L108.5 131.6 L107.0 140.4 L106.5 149.2 L106.9 157.9 L108.3 166.5 L110.5 174.8 L113.6 182.8 L117.5 190.4 L122.2 197.4 L127.5 203.8 L133.5 209.6 L139.9 214.6 L146.9 218.9 L154.1 222.4 L161.7 225.1 L169.4 226.9 L177.1 227.9 L184.9 228.0 L192.5 227.3 L200.0 225.8 L207.1 223.6 L213.9 220.6 L220.2 216.9 L226.0 212.6 L231.3 207.8 L235.9 202.6 L239.9 196.9 L243.2 190.9 L245.8 184.7 L247.6 178.3 L248.8 171.9 L249.2 165.4 L248.9 159.1 L248.0 153.0 L246.4 147.1 L244.2 141.5 L241.4 136.3 L238.2 131.5 L234.5 127.2 L230.4 123.4 L226.1 120.2 L221.5 117.5 L216.7 115.4 L211.8 113.9 L207.0 113.0 L202.1 112.7 L197.4 112.9 L192.9 113.6 L188.6 114.8 L184.6 116.5 L180.9 118.5 L177.6 120.9 L174.7 123.6 L172.2 126.5 L170.2 129.6 L168.6 132.8 L167.5 136.1 L166.8 139.3"/>
<path d="M265 95 C 320 120, 350 200, 350 270 C 350 330, 330 370, 300 400"/>
<path d="M200 62 C 240 60, 270 75, 290 100"/>
<path d="M244.6 396.5 L255.0 395.3 L265.5 395.1 L275.9 396.1 L286.1 398.2 L296.1 401.4 L305.6 405.7 L314.6 410.9 L323.0 417.0 L330.6 424.0 L337.5 431.7 L343.4 440.1 L348.5 449.0 L352.5 458.4 L355.5 468.2 L357.4 478.2 L358.3 488.3 L358.1 498.4 L356.8 508.3 L354.4 518.0 L351.1 527.4 L346.8 536.3 L341.6 544.7 L335.5 552.4 L328.7 559.4 L321.3 565.6 L313.3 571.0 L304.8 575.4 L295.9 578.9 L286.8 581.4 L277.5 582.8 L268.2 583.3 L258.9 582.8 L249.9 581.3 L241.1 578.9 L232.7 575.6 L224.7 571.4 L217.4 566.4 L210.6 560.8 L204.6 554.5 L199.3 547.6 L194.8 540.3 L191.2 532.7 L188.4 524.7 L186.6 516.6 L185.6 508.5 L185.5 500.4 L186.3 492.4 L187.9 484.6 L190.3 477.1 L193.5 470.1 L197.3 463.5 L201.8 457.4 L206.9 451.9 L212.4 447.1 L218.4 443.0 L224.6 439.6 L231.1 437.0 L237.8 435.1 L244.5 433.9 L251.2 433.5 L257.7 433.9 L264.1 434.9 L270.2 436.6 L276.0 438.9 L281.4 441.8 L286.3 445.2 L290.7 449.1 L294.6 453.3 L297.9 457.8 L300.6 462.6 L302.7 467.5 L304.2 472.6 L305.1 477.6 L305.4 482.6 L305.2 487.4 L304.4 492.0 L303.1 496.4 L301.3 500.5 L299.2 504.3 L296.7 507.6 L293.9 510.6 L290.9 513.0 L287.7 515.1 L284.4 516.6 L281.0 517.7 L277.7 518.3 L274.5 518.5 L271.4 518.3 L268.5 517.6 L265.8 516.7"/>
<path d="M215 445 C 200 300, 320 200, 430 205 C 540 210, 575 300, 555 355"/>
<path d="M550.8 359.2 L548.8 367.6 L545.9 375.7 L542.2 383.4 L537.7 390.7 L532.5 397.4 L526.5 403.5 L520.0 409.0 L512.9 413.6 L505.4 417.5 L497.5 420.6 L489.4 422.7 L481.1 424.0 L472.8 424.4 L464.5 423.9 L456.3 422.5 L448.4 420.3 L440.8 417.2 L433.6 413.4 L427.0 408.8 L420.8 403.6 L415.4 397.8 L410.6 391.4 L406.5 384.7 L403.2 377.6 L400.7 370.2 L399.0 362.7 L398.2 355.1 L398.2 347.5 L399.0 340.0 L400.5 332.8 L402.9 325.7 L405.9 319.1 L409.6 312.9 L413.9 307.2 L418.8 302.0 L424.1 297.5 L429.8 293.6 L435.8 290.3 L442.1 287.8 L448.5 286.0 L455.0 284.9 L461.5 284.6 L467.9 284.9 L474.1 286.0 L480.1 287.7 L485.8 290.0 L491.1 292.8 L496.0 296.2 L500.4 300.0 L504.2 304.2 L507.6 308.7 L510.3 313.5 L512.5 318.5 L514.0 323.5 L515.0 328.6 L515.4 333.7 L515.2 338.7 L514.4 343.4 L513.2 348.0 L511.5 352.3 L509.3 356.3 L506.8 359.9 L503.9 363.0 L500.8 365.8 L497.5 368.1 L494.0 369.9 L490.5 371.3 L487.0 372.1 L483.4 372.6 L480.0 372.6 L476.8 372.1 L473.7 371.3 L470.9 370.2 L468.3 368.7 L466.1 367.0 L464.2 365.1 L462.7 363.1 L461.5 360.9"/>
<path d="M440 275 C 430 180, 480 110, 560 108 C 640 106, 700 150, 790 195 C 870 235, 960 225, 980 150"/>
<path d="M979.7 162.6 L981.8 155.4 L983.2 148.0 L983.8 140.5 L983.6 133.0 L982.5 125.6 L980.7 118.3 L978.1 111.3 L974.8 104.6 L970.8 98.4 L966.1 92.6 L960.9 87.4 L955.2 82.7 L949.0 78.8 L942.5 75.5 L935.7 73.0 L928.7 71.2 L921.5 70.1 L914.4 69.9 L907.3 70.4 L900.3 71.7 L893.6 73.7 L887.1 76.4 L881.0 79.7 L875.4 83.7 L870.2 88.2 L865.6 93.2 L861.6 98.6 L858.2 104.4 L855.5 110.4 L853.4 116.7 L852.1 123.1 L851.5 129.5 L851.5 135.9 L852.3 142.2 L853.7 148.3 L855.7 154.1 L858.3 159.7 L861.5 164.9 L865.2 169.6 L869.3 173.8 L873.8 177.6 L878.6 180.8 L883.6 183.4 L888.9 185.4 L894.2 186.8 L899.6 187.6 L905.0 187.8 L910.3 187.4 L915.4 186.5 L920.3 185.0 L924.9 183.1 L929.2 180.6 L933.2 177.8 L936.7 174.6 L939.8 171.1 L942.4 167.4 L944.5 163.4 L946.2 159.4 L947.3 155.2 L948.0 151.1 L948.2 147.0 L947.9 143.0 L947.2 139.2 L946.1 135.6 L944.6 132.3 L942.8 129.2 L940.7 126.4 L938.3 124.0 L935.8 122.0 L933.1 120.3 L930.3 119.0 L927.5 118.1 L924.8 117.6 L922.0 117.4 L919.4 117.6 L917.0 118.1 L914.7 118.9 L912.6 120.0"/>
<path d="M552.9 165.6 L551.5 170.4 L550.6 175.3 L550.2 180.3 L550.4 185.3 L551.2 190.2 L552.5 195.0 L554.3 199.6 L556.6 204.0 L559.4 208.0 L562.6 211.7 L566.1 215.1 L569.9 217.9 L574.0 220.4 L578.3 222.3 L582.8 223.7 L587.4 224.7 L591.9 225.1 L596.5 225.0 L601.0 224.4 L605.3 223.3 L609.4 221.8 L613.3 219.9 L616.9 217.5 L620.2 214.9 L623.1 211.9 L625.6 208.6 L627.7 205.2 L629.3 201.6 L630.6 197.9 L631.4 194.1 L631.7 190.4 L631.6 186.7 L631.1 183.2 L630.3 179.7 L629.0 176.5 L627.5 173.6 L625.6 170.8 L623.5 168.4 L621.2 166.4 L618.7 164.6 L616.1 163.2 L613.5 162.2 L610.8 161.6 L608.1 161.2 L605.5 161.3 L603.1 161.6 L600.8 162.2 L598.7 163.1 L596.8 164.3 L595.1 165.6 L593.7 167.1 L592.6 168.7 L591.8 170.4 L591.3 172.1"/>
<path d="M560 300 C 650 255, 800 250, 865 310 C 905 360, 890 510, 770 530"/>
<path d="M760.0 528.0 L747.7 527.3 L735.5 525.3 L723.6 522.0 L712.2 517.4 L701.3 511.7 L691.1 504.8 L681.8 496.8 L673.4 488.0 L666.0 478.3 L659.7 467.9 L654.5 457.0 L650.6 445.5 L648.0 433.8 L646.6 421.9 L646.5 410.0 L647.6 398.2 L650.1 386.6 L653.7 375.5 L658.4 364.8 L664.3 354.8 L671.2 345.5 L678.9 337.0 L687.5 329.5 L696.8 323.0 L706.6 317.5 L716.9 313.2 L727.5 310.0 L738.3 308.0 L749.2 307.2 L760.0 307.6 L770.6 309.1 L780.9 311.7 L790.8 315.3 L800.1 320.0 L808.7 325.6 L816.7 332.0 L823.8 339.2 L830.0 347.0 L835.3 355.3 L839.6 364.1 L842.9 373.1 L845.1 382.3 L846.3 391.7 L846.5 400.9 L845.7 410.0 L844.0 418.8 L841.3 427.3 L837.7 435.3 L833.4 442.7 L828.4 449.5 L822.7 455.6 L816.6 460.9 L810.0 465.5 L803.0 469.2 L795.8 472.1 L788.5 474.1 L781.2 475.2 L773.9 475.6 L766.8 475.1 L760.0 473.8 L753.5 471.8 L747.4 469.2 L741.8 466.0 L736.8 462.2 L732.3 458.0 L728.5 453.4 L725.3 448.6 L722.8 443.5 L720.9 438.4 L719.7 433.2 L719.2 428.2 L719.3 423.2 L720.0 418.5 L721.2 414.1 L723.0 410.0 L725.1 406.3 L727.6 403.1 L730.4 400.4 L733.4 398.2 L736.6 396.5 L739.8 395.3"/>
<path d="M730 385 H985 C 1030 390, 1050 430, 1040 470"/>
<path d="M1043.3 462.6 L1042.3 467.1 L1040.7 471.5 L1038.7 475.6 L1036.3 479.5 L1033.4 483.0 L1030.2 486.3 L1026.7 489.1 L1022.9 491.6 L1018.8 493.6 L1014.6 495.2 L1010.3 496.2 L1005.9 496.8 L1001.5 496.9 L997.1 496.6 L992.8 495.7 L988.7 494.4 L984.8 492.7 L981.1 490.6 L977.7 488.1 L974.6 485.3 L971.8 482.2 L969.5 478.9 L967.5 475.3 L966.0 471.6 L964.9 467.8 L964.2 463.9 L964.0 460.1 L964.1 456.3 L964.7 452.5 L965.7 449.0 L967.1 445.6 L968.8 442.4 L970.8 439.5 L973.1 436.8 L975.6 434.5 L978.3 432.5 L981.2 430.9 L984.1 429.6 L987.2 428.7 L990.2 428.1 L993.3 428.0 L996.2 428.1 L999.1 428.6 L1001.8 429.4 L1004.3 430.4 L1006.7 431.8 L1008.8 433.3 L1010.6 435.1 L1012.2 436.9 L1013.5 438.9 L1014.5 441.0 L1015.2 443.1 L1015.6 445.2 L1015.8 447.3 L1015.6 449.3 L1015.3 451.2 L1014.7 452.9 L1013.9 454.5 L1012.9 455.9 L1011.8 457.1"/>
<path d="M660 450 C 650 540, 520 580, 400 600 C 280 620, 180 670, 115 745"/>
<path d="M45 650 C 100 610, 160 640, 190 700 C 230 760, 300 790, 350 780"/>
<path d="M410 450 C 460 450, 540 500, 550 565 C 500 550, 440 520, 410 450 Z"/>
<path d="M480 500 L 550 565"/>
<path d="M350.0 690.0 L350.3 695.2 L351.2 700.4 L352.6 705.4 L354.6 710.2 L357.1 714.8 L360.0 719.0 L363.4 722.9 L367.2 726.4 L371.3 729.4 L375.8 732.0 L380.4 734.0 L385.2 735.6 L390.1 736.5 L395.1 737.0 L400.0 736.9 L404.9 736.2 L409.6 735.1 L414.1 733.4 L418.4 731.3 L422.4 728.7 L426.0 725.8 L429.3 722.5 L432.1 718.9 L434.5 715.1 L436.5 711.1 L438.0 706.9 L439.0 702.7 L439.5 698.4 L439.5 694.2 L439.1 690.0 L438.2 686.0 L436.9 682.2 L435.2 678.6 L433.2 675.2 L430.8 672.2 L428.2 669.5 L425.3 667.2 L422.3 665.3 L419.1 663.7 L415.8 662.6 L412.5 661.8 L409.3 661.5 L406.1 661.5 L403.0 661.9 L400.0 662.6 L397.2 663.7 L394.7 665.0 L392.4 666.6 L390.4 668.4 L388.7 670.4 L387.3 672.5 L386.2 674.7 L385.4 676.9 L385.0 679.1 L384.8 681.2 L385.0 683.3 L385.4 685.3 L386.1 687.0 L386.9 688.6 L388.0 690.0"/>
<path d="M458.9 657.8 L457.0 664.3 L455.7 671.0 L455.2 677.7 L455.5 684.5 L456.4 691.2 L458.1 697.7 L460.5 704.0 L463.5 710.0 L467.2 715.6 L471.4 720.8 L476.1 725.4 L481.3 729.5 L486.9 733.0 L492.8 735.8 L498.9 738.0 L505.2 739.5 L511.5 740.3 L517.9 740.4 L524.2 739.9 L530.3 738.6 L536.3 736.7 L541.9 734.2 L547.2 731.2 L552.1 727.6 L556.5 723.5 L560.4 719.0 L563.8 714.2 L566.6 709.1 L568.8 703.8 L570.4 698.3 L571.4 692.8 L571.7 687.3 L571.5 681.8 L570.6 676.5 L569.2 671.3 L567.3 666.4 L564.9 661.9 L562.0 657.7 L558.8 653.8 L555.2 650.5 L551.3 647.6 L547.2 645.2 L542.9 643.3 L538.6 641.9 L534.2 641.1 L529.8 640.7 L525.5 640.9 L521.3 641.5 L517.4 642.6 L513.7 644.1 L510.2 645.9 L507.1 648.1 L504.4 650.6 L502.0 653.3 L500.0 656.1 L498.4 659.1 L497.2 662.2 L496.5 665.3 L496.1 668.3 L496.1 671.3 L496.5 674.1 L497.2 676.8 L498.2 679.2 L499.5 681.4 L501.0 683.3 L502.7 685.0"/>
<path d="M102.7 284.6 L104.6 280.3 L106.9 276.2 L109.7 272.4 L112.8 268.9 L116.3 265.8 L120.1 263.1 L124.2 260.9 L128.5 259.1 L132.9 257.8 L137.4 257.0 L142.0 256.7 L146.5 256.8 L151.0 257.5 L155.3 258.7 L159.5 260.3 L163.4 262.3 L167.0 264.7 L170.4 267.5 L173.4 270.6 L176.0 274.0 L178.2 277.6 L179.9 281.4 L181.3 285.3 L182.2 289.3 L182.6 293.4 L182.6 297.4 L182.1 301.3 L181.3 305.1 L180.0 308.7 L178.4 312.1 L176.4 315.3 L174.1 318.2 L171.6 320.8 L168.8 323.0 L165.9 324.9 L162.8 326.4 L159.6 327.5 L156.4 328.3 L153.2 328.6 L150.1 328.7 L147.0 328.3 L144.0 327.6 L141.3 326.6 L138.7 325.3 L136.3 323.8 L134.2 322.1 L132.4 320.1 L130.9 318.1 L129.7 315.9 L128.7 313.6 L128.1 311.4 L127.8 309.2 L127.8 307.0 L128.0 304.9 L128.5 302.9 L129.2 301.1 L130.1 299.5 L131.2 298.1 L132.4 296.9 L133.7 295.9"/>
<path d="M40 335 C 60 275, 100 255, 145 256"/>
<path d="M98.7 831.0 L107.1 821.5 L116.7 812.8 L127.6 804.9 L139.5 797.9 L152.4 791.9 L166.0 786.9 L180.3 783.1 L195.0 780.4 L209.9 778.9 L225.0 778.6 L240.0 779.4 L254.7 781.5 L269.0 784.7 L282.7 789.0 L295.7 794.3 L307.8 800.6 L318.9 807.8 L328.8 815.8 L337.5 824.5 L344.9 833.7 L350.8 843.5 L355.3 853.6 L358.3 864.0 L359.8 874.5 L359.8 885.0 L358.2 895.4 L355.2 905.5 L350.8 915.3 L345.0 924.6 L338.0 933.3 L329.8 941.4 L320.6 948.7 L310.4 955.2 L299.4 960.9 L287.8 965.6 L275.6 969.3 L263.1 972.0 L250.4 973.6 L237.7 974.3 L225.0 974.0 L212.6 972.6 L200.5 970.3 L189.0 967.1 L178.1 963.0 L168.0 958.1 L158.7 952.6 L150.4 946.3 L143.2 939.6 L137.0 932.3 L132.0 924.8 L128.2 916.9 L125.6 908.9 L124.1 900.9 L123.9 892.9 L124.8 885.0 L126.9 877.4 L130.0 870.0 L134.1 863.1 L139.1 856.7 L144.9 850.8 L151.5 845.5 L158.7 840.8 L166.4 836.8 L174.5 833.5 L182.9 831.0 L191.5 829.2 L200.1 828.1 L208.6 827.8 L216.9 828.1 L225.0 829.2 L232.7 830.8 L239.9 833.0 L246.6 835.8 L252.6 839.0 L258.0 842.6 L262.7 846.6 L266.6 850.8 L269.8 855.1 L272.1 859.6 L273.7 864.2 L274.5 868.7 L274.6 873.1 L274.0 877.3 L272.8 881.3 L270.9 885.0 L268.6 888.4 L265.7 891.4 L262.6 894.0 L259.1 896.2 L255.4 898.0"/>
</g><g fill="#1f1c19">
<circle cx="195" cy="150" r="36"/>
<path d="M295 105 C 330 95, 360 75, 370 35 C 355 60, 330 80, 295 105 Z"/>
<path d="M432 340 A 40 30 0 0 0 505 352 Z"/>
<path d="M785 205 C 810 190, 820 165, 805 140 C 800 170, 785 185, 785 205 Z"/>
<path d="M905 385 C 915 350, 945 335, 978 338 C 950 355, 935 370, 925 385 Z"/>
<circle cx="150" cy="300" r="20"/>
<path d="M40 395 C 70 430, 95 460, 110 505 C 80 480, 50 450, 40 420 Z"/>
<circle cx="105" cy="692" r="26"/>
<path d="M165 1048 C 250 1085, 370 1050, 382 965 C 360 1000, 300 1040, 165 1048 Z"/>
<path d="M318 778 C 350 755, 395 765, 412 805 C 385 790, 350 785, 318 778 Z"/>
</g>
</svg>
<svg class="a" style="left:1330px;top:270px" width="270" height="280" viewBox="0 0 1234 1280">
<g fill="none" stroke="#1f1c19" stroke-width="12" stroke-linecap="round" stroke-linejoin="round">
<path d="M40 38 H1100 V1245"/>
<path d="M449.0 104.5 L438.9 99.4 L428.3 95.4 L417.4 92.5 L406.3 90.9 L395.0 90.4 L383.8 91.2 L372.7 93.1 L361.9 96.2 L351.6 100.4 L341.7 105.7 L332.5 112.0 L324.1 119.3 L316.5 127.3 L309.8 136.1 L304.1 145.5 L299.5 155.5 L295.9 165.8 L293.5 176.4 L292.2 187.2 L292.1 198.0 L293.1 208.7 L295.3 219.2 L298.5 229.3 L302.8 239.0 L308.1 248.2 L314.3 256.7 L321.3 264.4 L329.0 271.3 L337.4 277.3 L346.3 282.4 L355.6 286.4 L365.3 289.4 L375.2 291.3 L385.1 292.2 L395.0 292.0 L404.8 290.8 L414.2 288.5 L423.4 285.3 L432.0 281.1 L440.1 276.1 L447.6 270.3 L454.3 263.8 L460.2 256.7 L465.3 249.1 L469.5 241.0 L472.8 232.6 L475.1 224.0 L476.5 215.3 L476.9 206.6 L476.4 198.0 L475.0 189.6 L472.7 181.5 L469.6 173.7 L465.8 166.5 L461.2 159.8 L456.0 153.7 L450.3 148.3 L444.0 143.5 L437.4 139.6 L430.5 136.4 L423.5 134.1 L416.3 132.5 L409.1 131.8 L402.0 131.8 L395.0 132.6 L388.3 134.2 L381.9 136.4 L375.9 139.3 L370.4 142.7 L365.4 146.7 L360.9 151.0 L357.0 155.8 L353.8 160.9 L351.2 166.2 L349.2 171.6 L347.9 177.0 L347.3 182.5 L347.2 187.8 L347.8 193.0 L348.9 198.0 L350.6 202.7 L352.7 207.0 L355.2 210.9 L358.1 214.4 L361.3 217.5 L364.7 220.0 L368.3 222.1 L371.9 223.6 L375.6 224.7 L379.3 225.2 L382.8 225.3 L386.2 225.0 L389.4 224.2 L392.4 223.1 L395.0 221.6 L397.3 219.9"/>
<path d="M450 103 C 480 95, 510 105, 525 125"/>
<path d="M222 160 C 195 240, 220 330, 300 345 C 380 350, 470 320, 530 240 C 570 180, 580 130, 560 100"/>
<path d="M615.0 102.0 L614.7 107.2 L613.8 112.4 L612.4 117.4 L610.5 122.2 L608.0 126.8 L605.0 131.1 L601.7 135.0 L597.9 138.5 L593.8 141.6 L589.4 144.2 L584.7 146.3 L579.9 147.9 L575.0 148.9 L570.0 149.4 L565.0 149.4 L560.1 148.8 L555.3 147.7 L550.7 146.1 L546.3 144.0 L542.2 141.5 L538.5 138.5 L535.1 135.2 L532.1 131.6 L529.5 127.8 L527.4 123.7 L525.8 119.4 L524.7 115.1 L524.0 110.7 L523.9 106.3 L524.2 102.0 L525.0 97.8 L526.2 93.8 L527.8 89.9 L529.8 86.3 L532.2 83.1 L534.9 80.1 L537.8 77.5 L541.0 75.3 L544.3 73.5 L547.7 72.1 L551.2 71.1 L554.8 70.5 L558.3 70.3 L561.7 70.5 L565.0 71.1 L568.2 72.0 L571.1 73.3 L573.8 74.8 L576.3 76.6 L578.5 78.7 L580.3 80.9 L581.9 83.2 L583.1 85.7 L584.0 88.2 L584.6 90.7 L584.9 93.2 L584.8 95.6 L584.5 97.9 L583.8 100.0 L583.0 102.0 L581.9 103.8 L580.7 105.3 L579.3 106.7 L577.8 107.7 L576.3 108.5 L574.7 109.1"/>
<path d="M540 110 C 570 200, 600 320, 640 430 C 670 510, 740 570, 830 610 C 900 650, 930 700, 930 740"/>
<path d="M632.0 238.0 L632.6 226.7 L634.5 215.6 L637.5 204.7 L641.6 194.2 L646.9 184.3 L653.2 174.9 L660.4 166.4 L668.5 158.6 L677.4 151.8 L686.9 146.0 L696.9 141.2 L707.4 137.6 L718.1 135.1 L729.0 133.8 L740.0 133.6 L750.9 134.7 L761.5 136.8 L771.8 140.1 L781.7 144.4 L791.0 149.8 L799.6 156.0 L807.4 163.1 L814.4 171.0 L820.5 179.5 L825.6 188.6 L829.7 198.1 L832.8 207.9 L834.7 217.9 L835.6 228.0 L835.3 238.0 L834.1 247.9 L831.7 257.5 L828.4 266.7 L824.2 275.5 L819.1 283.7 L813.2 291.2 L806.5 297.9 L799.3 303.9 L791.6 309.0 L783.4 313.1 L774.9 316.4 L766.2 318.7 L757.4 320.0 L748.7 320.3 L740.0 319.7 L731.6 318.2 L723.4 315.9 L715.7 312.7 L708.5 308.7 L701.9 304.0 L695.8 298.8 L690.5 293.0 L685.9 286.7 L682.1 280.1 L679.1 273.2 L676.9 266.1 L675.5 259.0 L674.9 251.8 L675.1 244.8 L676.1 238.0 L677.7 231.5 L680.1 225.3 L683.0 219.5 L686.5 214.2 L690.5 209.4 L694.9 205.3 L699.7 201.7 L704.7 198.8 L709.8 196.5 L715.1 194.8 L720.3 193.8 L725.5 193.5 L730.6 193.7 L735.4 194.5 L740.0 195.8 L744.2 197.6 L748.1 199.9 L751.5 202.5 L754.5 205.4 L757.0 208.5 L759.0 211.8 L760.5 215.2 L761.5 218.6 L762.1 222.0 L762.1 225.2 L761.7 228.3 L760.9 231.2"/>
<path d="M922.0 82.0 L917.2 82.3 L912.5 83.1 L907.8 84.4 L903.4 86.3 L899.2 88.6 L895.4 91.3 L891.8 94.5 L888.7 98.0 L885.9 101.8 L883.7 105.9 L881.9 110.1 L880.5 114.5 L879.7 119.0 L879.4 123.5 L879.6 128.0 L880.3 132.4 L881.4 136.6 L883.0 140.7 L885.0 144.5 L887.4 148.0 L890.1 151.2 L893.1 154.0 L896.4 156.4 L899.9 158.4 L903.5 160.0 L907.2 161.2 L911.0 161.9 L914.7 162.2 L918.4 162.1 L922.0 161.5 L925.4 160.6 L928.6 159.3 L931.6 157.6 L934.3 155.7 L936.8 153.6 L938.8 151.2 L940.6 148.6 L942.0 146.0 L943.0 143.3 L943.7 140.5 L944.0 137.8 L944.0 135.1 L943.6 132.6 L943.0 130.2 L942.1 128.0 L940.9 126.0 L939.6 124.3 L938.1 122.8 L936.4 121.6 L934.7 120.7 L932.9 120.1 L931.2 119.7 L929.5 119.7 L927.9 119.9"/>
<path d="M980.0 198.0 L980.5 189.4 L981.9 181.0 L984.2 172.7 L987.4 164.8 L991.4 157.2 L996.2 150.2 L1001.7 143.7 L1007.8 137.8 L1014.5 132.7 L1021.8 128.3 L1029.4 124.8 L1037.3 122.0 L1045.5 120.2 L1053.7 119.2 L1062.0 119.2 L1070.2 120.0 L1078.2 121.7 L1086.0 124.2 L1093.4 127.5 L1100.3 131.6 L1106.8 136.4 L1112.6 141.8 L1117.8 147.7 L1122.3 154.2 L1126.1 161.0 L1129.1 168.1 L1131.3 175.5 L1132.6 183.0 L1133.2 190.5 L1132.9 198.0 L1131.8 205.3 L1130.0 212.5 L1127.5 219.3 L1124.2 225.7 L1120.3 231.7 L1115.9 237.1 L1110.9 242.0 L1105.5 246.3 L1099.7 249.9 L1093.7 252.9 L1087.4 255.1 L1081.1 256.6 L1074.6 257.4 L1068.3 257.5 L1062.0 257.0 L1055.9 255.7 L1050.1 253.8 L1044.7 251.4 L1039.6 248.4 L1034.9 244.9 L1030.8 241.0 L1027.1 236.7 L1024.0 232.2 L1021.5 227.4 L1019.6 222.5 L1018.3 217.5 L1017.5 212.4 L1017.4 207.5 L1017.8 202.7 L1018.7 198.0 L1020.1 193.6 L1021.9 189.5 L1024.2 185.7 L1026.8 182.3 L1029.7 179.3 L1032.8 176.8 L1036.1 174.7 L1039.5 173.1 L1043.0 171.9 L1046.5 171.2 L1049.9 170.9 L1053.2 171.1 L1056.4 171.6 L1059.3 172.5 L1062.0 173.8 L1064.4 175.3 L1066.5 177.0 L1068.2 179.0"/>
<path d="M820 300 C 900 320, 1000 330, 1100 300"/>
<path d="M850 275 C 960 265, 1025 340, 1015 420 C 1005 480, 965 515, 940 510"/>
<path d="M980.0 440.0 L979.5 430.6 L978.0 421.3 L975.4 412.2 L972.0 403.5 L967.6 395.2 L962.3 387.5 L956.3 380.3 L949.5 373.9 L942.2 368.2 L934.2 363.4 L925.9 359.4 L917.2 356.4 L908.2 354.3 L899.1 353.3 L890.0 353.2 L881.0 354.0 L872.1 355.8 L863.5 358.6 L855.4 362.2 L847.6 366.6 L840.5 371.9 L834.0 377.8 L828.2 384.3 L823.1 391.4 L818.9 399.0 L815.5 406.8 L813.0 415.0 L811.4 423.3 L810.8 431.7 L811.0 440.0 L812.1 448.2 L814.0 456.2 L816.8 463.8 L820.3 471.0 L824.6 477.8 L829.5 483.9 L835.0 489.5 L841.0 494.4 L847.4 498.6 L854.2 502.0 L861.2 504.6 L868.4 506.5 L875.6 507.5 L882.9 507.8 L890.0 507.2 L896.9 506.0 L903.6 504.0 L909.9 501.3 L915.8 498.0 L921.2 494.1 L926.1 489.7 L930.5 484.9 L934.2 479.8 L937.2 474.3 L939.7 468.7 L941.4 462.9 L942.5 457.0 L942.9 451.2 L942.6 445.5 L941.8 440.0 L940.4 434.7 L938.4 429.7 L935.9 425.1 L933.0 420.8 L929.7 417.1 L926.1 413.8 L922.3 411.0 L918.2 408.7 L914.0 406.9 L909.8 405.7 L905.6 405.0 L901.4 404.8 L897.4 405.2 L893.6 405.9 L890.0 407.1 L886.7 408.6 L883.7 410.5 L881.1 412.7 L878.9 415.0 L877.1 417.6 L875.6 420.2 L874.6 422.9 L874.0 425.6 L873.8 428.2"/>
<path d="M1040.0 512.0 L1044.8 512.3 L1049.5 513.1 L1054.2 514.4 L1058.6 516.2 L1062.8 518.5 L1066.7 521.2 L1070.3 524.3 L1073.5 527.8 L1076.3 531.6 L1078.7 535.7 L1080.6 539.9 L1082.0 544.4 L1082.9 548.9 L1083.3 553.5 L1083.2 558.0 L1082.6 562.5 L1081.6 566.8 L1080.0 571.0 L1078.1 575.0 L1075.8 578.6 L1073.1 582.0 L1070.0 585.0 L1066.7 587.7 L1063.2 589.9 L1059.5 591.7 L1055.6 593.1 L1051.7 594.1 L1047.8 594.6 L1043.8 594.6 L1040.0 594.2 L1036.3 593.4 L1032.7 592.3 L1029.4 590.7 L1026.3 588.8 L1023.4 586.7 L1020.9 584.2 L1018.7 581.6 L1016.9 578.8 L1015.5 575.8 L1014.4 572.8 L1013.6 569.7 L1013.3 566.7 L1013.3 563.7 L1013.6 560.8 L1014.3 558.0 L1015.2 555.4 L1016.4 553.0 L1017.9 550.8 L1019.5 548.9 L1021.4 547.2 L1023.3 545.9 L1025.3 544.8 L1027.4 544.0 L1029.5 543.5 L1031.5 543.3 L1033.5 543.4 L1035.4 543.7 L1037.1 544.3 L1038.6 545.1 L1040.0 546.0"/>
<path d="M901.0 619.8 L890.0 614.2 L878.4 609.9 L866.5 606.8 L854.3 605.0 L842.0 604.6 L829.7 605.4 L817.7 607.6 L805.9 611.0 L794.7 615.7 L784.0 621.5 L774.0 628.4 L764.9 636.3 L756.6 645.1 L749.4 654.7 L743.3 665.0 L738.4 675.9 L734.6 687.1 L732.1 698.6 L730.8 710.3 L730.8 722.0 L732.0 733.6 L734.5 744.9 L738.1 755.8 L742.8 766.2 L748.6 775.9 L755.4 785.0 L763.0 793.2 L771.4 800.4 L780.4 806.7 L790.1 812.0 L800.1 816.1 L810.4 819.2 L820.9 821.0 L831.5 821.8 L842.0 821.4 L852.3 819.9 L862.3 817.3 L871.8 813.7 L880.8 809.1 L889.2 803.7 L896.8 797.4 L903.7 790.5 L909.7 782.9 L914.7 774.8 L918.8 766.4 L922.0 757.6 L924.1 748.7 L925.3 739.7 L925.4 730.8 L924.6 722.0 L922.9 713.5 L920.3 705.4 L916.9 697.7 L912.7 690.5 L907.8 684.0 L902.4 678.1 L896.4 673.0 L890.0 668.6 L883.4 665.1 L876.4 662.3 L869.4 660.4 L862.4 659.3 L855.4 659.0 L848.6 659.5 L842.0 660.7 L835.8 662.6 L829.9 665.2 L824.5 668.3 L819.7 671.9 L815.4 675.9 L811.7 680.3 L808.7 685.0 L806.3 689.8 L804.5 694.8 L803.4 699.7 L802.9 704.6 L803.0 709.3 L803.6 713.8 L804.8 718.1 L806.4 722.0 L808.5 725.5 L810.9 728.6 L813.5 731.2 L816.4 733.4"/>
<path d="M848 690 V895"/>
<path d="M836.0 922.0 L835.7 917.2 L834.9 912.5 L833.6 907.8 L831.8 903.4 L829.5 899.2 L826.8 895.3 L823.6 891.7 L820.1 888.5 L816.3 885.7 L812.3 883.4 L808.0 881.5 L803.6 880.1 L799.1 879.2 L794.5 878.9 L790.0 879.0 L785.5 879.6 L781.2 880.6 L777.1 882.2 L773.1 884.1 L769.5 886.5 L766.2 889.2 L763.2 892.2 L760.6 895.5 L758.4 899.0 L756.6 902.7 L755.3 906.5 L754.4 910.4 L753.9 914.3 L753.9 918.2 L754.3 922.0 L755.2 925.7 L756.4 929.1 L757.9 932.4 L759.8 935.4 L762.0 938.2 L764.4 940.6 L767.0 942.7 L769.8 944.4 L772.7 945.8 L775.7 946.8 L778.7 947.5 L781.6 947.7 L784.5 947.7 L787.3 947.3 L790.0 946.6 L792.5 945.6 L794.7 944.3 L796.8 942.8 L798.5 941.2 L800.0 939.4 L801.2 937.5 L802.2 935.5 L802.8 933.5 L803.1 931.5 L803.2 929.6 L803.0 927.8 L802.5 926.1 L801.9 924.5 L801.0 923.2 L800.0 922.0"/>
<path d="M572.0 429.0 L576.6 428.7 L581.1 428.0 L585.5 426.7 L589.8 425.0 L593.8 422.8 L597.5 420.2 L601.0 417.2 L604.0 413.8 L606.7 410.2 L608.9 406.3 L610.7 402.2 L612.1 398.0 L612.9 393.7 L613.3 389.3 L613.2 385.0 L612.6 380.7 L611.6 376.6 L610.1 372.6 L608.3 368.8 L606.0 365.4 L603.4 362.2 L600.5 359.3 L597.4 356.8 L594.0 354.7 L590.5 353.0 L586.8 351.7 L583.1 350.8 L579.4 350.4 L575.6 350.4 L572.0 350.8 L568.5 351.5 L565.1 352.7 L562.0 354.2 L559.1 356.0 L556.4 358.1 L554.1 360.4 L552.1 362.9 L550.4 365.6 L549.1 368.3 L548.1 371.2 L547.5 374.1 L547.2 376.9 L547.2 379.7 L547.6 382.4 L548.3 385.0 L549.2 387.4 L550.4 389.6 L551.8 391.6 L553.4 393.3 L555.1 394.8 L556.9 395.9 L558.8 396.9 L560.8 397.5 L562.7 397.8 L564.5 397.9 L566.3 397.8 L568.0 397.4 L569.5 396.8 L570.8 396.0 L572.0 395.0"/>
<path d="M566.0 548.0 L571.9 547.7 L577.6 546.7 L583.3 545.1 L588.7 542.9 L593.8 540.1 L598.6 536.8 L603.0 533.0 L606.9 528.8 L610.3 524.2 L613.2 519.3 L615.6 514.1 L617.3 508.7 L618.5 503.2 L619.0 497.6 L618.9 492.0 L618.3 486.5 L617.0 481.2 L615.2 476.0 L612.9 471.1 L610.1 466.6 L606.8 462.4 L603.1 458.6 L599.1 455.3 L594.7 452.5 L590.2 450.1 L585.4 448.4 L580.6 447.1 L575.7 446.4 L570.8 446.3 L566.0 446.6 L561.3 447.5 L556.8 448.9 L552.6 450.8 L548.6 453.0 L545.0 455.7 L541.8 458.7 L538.9 461.9 L536.5 465.4 L534.5 469.1 L533.0 472.9 L531.9 476.8 L531.3 480.7 L531.1 484.6 L531.4 488.4 L532.1 492.0 L533.2 495.5 L534.6 498.7 L536.3 501.6 L538.4 504.3 L540.6 506.7 L543.1 508.7 L545.7 510.3 L548.4 511.6 L551.1 512.5 L553.8 513.1 L556.5 513.3 L559.1 513.1 L561.6 512.7 L563.9 511.9 L566.0 510.9 L567.9 509.7 L569.5 508.3 L570.8 506.8 L571.8 505.1 L572.6 503.4 L573.1 501.7"/>
<path d="M680 510 C 690 440, 740 400, 792 385 C 772 440, 740 490, 680 510 Z"/>
<path d="M700 490 L 770 410"/>
<path d="M1004.8 814.6 L1002.4 822.7 L1000.9 830.9 L1000.2 839.2 L1000.5 847.6 L1001.6 855.8 L1003.7 863.9 L1006.6 871.7 L1010.2 879.1 L1014.7 886.0 L1019.9 892.5 L1025.7 898.3 L1032.0 903.4 L1038.9 907.8 L1046.1 911.5 L1053.7 914.3 L1061.5 916.3 L1069.4 917.4 L1077.4 917.7 L1085.3 917.1 L1093.0 915.7 L1100.5 913.5 L1107.7 910.5 L1114.4 906.8 L1120.7 902.4 L1126.4 897.4 L1131.6 891.8 L1136.0 885.8 L1139.8 879.4 L1142.8 872.6 L1145.1 865.7 L1146.6 858.6 L1147.3 851.5 L1147.2 844.3 L1146.4 837.4 L1144.8 830.6 L1142.6 824.1 L1139.6 817.9 L1136.1 812.2 L1132.0 806.9 L1127.5 802.2 L1122.5 798.0 L1117.1 794.5 L1111.5 791.6 L1105.7 789.3 L1099.7 787.8 L1093.7 786.9 L1087.8 786.7 L1081.9 787.1 L1076.2 788.1 L1070.8 789.8 L1065.6 791.9 L1060.9 794.6 L1056.5 797.8 L1052.6 801.3 L1049.1 805.2 L1046.2 809.4 L1043.8 813.8 L1042.0 818.3 L1040.7 822.8 L1040.0 827.4 L1039.8 832.0 L1040.1 836.4 L1040.9 840.6 L1042.1 844.6 L1043.8 848.4 L1045.8 851.8 L1048.1 854.9 L1050.7 857.6 L1053.6 859.8 L1056.5 861.7 L1059.6 863.1 L1062.7 864.1 L1065.8 864.7 L1068.9 864.9 L1071.8 864.6 L1074.5 864.1 L1077.0 863.2 L1079.3 862.0"/>
<path d="M1020 420 C 1090 450, 1112 530, 1098 600 C 1082 650, 1030 700, 1005 760 C 990 800, 1000 840, 1005 850"/>
</g><g fill="#1f1c19">
<path d="M235 295 C 265 285, 300 300, 310 345 C 280 335, 250 320, 235 295 Z"/>
<circle cx="562" cy="100" r="22"/>
<path d="M470 135 C 560 100, 680 100, 760 70 C 800 55, 840 45, 880 62 C 840 65, 800 75, 760 90 C 680 115, 560 120, 470 135 Z"/>
<circle cx="915" cy="135" r="20"/>
<circle cx="1060" cy="188" r="26"/>
<path d="M1098 290 C 1120 325, 1140 340, 1172 345 C 1145 310, 1125 300, 1098 290 Z"/>
<circle cx="882" cy="432" r="22"/>
<path d="M850 850 C 875 855, 895 875, 892 908 C 875 885, 860 870, 850 850 Z"/>
<path d="M1085 610 L 1005 745 C 1030 755, 1060 745, 1075 735 C 1050 740, 1035 742, 1020 742 Z"/>
</g>
</svg>
<!--/ORN-->

<div id="statusbar" class="a">
<div class="a" style="left:0;top:0;width:88px;height:23px;background:#343434;color:#dcdcdc;font-size:14px;line-height:23px;padding-left:29px">25%</div>
<div class="a" style="left:88px;top:0;width:32px;height:23px;background:#4a4a4a"><svg class="a" style="left:7px;top:3px" width="18" height="17" viewBox="0 0 18 17"><circle cx="9" cy="8.5" r="8" fill="#d6d6d6"/><path d="M5 4v9h8l-3-3V7z" fill="#4a4a4a"/><path d="M6 5v7h6" stroke="#eee" stroke-width="1" fill="none"/></svg></div>
<div class="a" style="left:120px;top:0;width:243px;height:23px;background:#4e4e4e;border-left:1px solid #3a3a3a;color:#e6e6e6;font-size:14px;line-height:23px;text-align:center">Doc: 33.8M/93.6M</div>
<div class="a" style="left:363px;top:0;width:18px;height:23px;background:#565656;border-left:1px solid #3a3a3a"><div class="a" style="left:5px;top:6px;border-top:6px solid transparent;border-bottom:6px solid transparent;border-left:9px solid #eee"></div></div>
</div>
<div id="bottombar" class="a">
<div class="a" style="left:2px;top:0;width:93px;height:28px;background:#4a4a4a;color:#e0e0e0;font-weight:bold;font-size:13.7px;line-height:28px;padding-left:10px">Mini Bridge</div>
<div class="a" style="left:96px;top:0;width:75px;height:28px;background:#393939;color:#a8a8a8;font-weight:bold;font-size:14px;line-height:28px;padding-left:9px;border-right:1px solid #2a2a2a">Timeline</div>
</div>
<!-- toolbar -->
<div class="a" style="left:88px;top:253px;width:53px;height:942px;background:#545454;border-radius:3px 3px 0 0;box-shadow:0 0 2px #1c1c1c"></div>
<div class="a" style="left:88px;top:253px;width:53px;height:18px;background:#3b3b3b;border-radius:3px 3px 0 0"></div>
<svg class="a" style="left:88px;top:253px" width="54" height="942" viewBox="0 0 54 942">
<g fill="none" stroke="#c6c6c6">
<path d="M7 5l6 6M13 5l-6 6" stroke-width="2"/>
<path d="M35 5l4 4-4 4z M40 5l4 4-4 4z" fill="#c6c6c6" stroke="none"/>
<path d="M12 26h30" stroke="#2e2e2e" stroke-width="3" stroke-dasharray="1 1.5"/>
<!-- move -->
<path d="M15 49v14l4-4 3 0z" fill="#c6c6c6" stroke="none"/>
<path d="M29 54v12M23 60h12M27 56l2-2 2 2M27 64l2 2 2-2M25 58l-2 2 2 2M33 58l2 2-2 2" stroke-width="1.5"/>
<!-- marquee -->
<rect x="17" y="86" width="19" height="16" stroke-width="1.6" stroke-dasharray="3 2"/>
<!-- lasso -->
<path d="M14 124L24 132L35 121L36 134L30 141L22 139L16 130z M22 139l-4 5" stroke-width="1.7" stroke-linejoin="round"/>
<!-- wand -->
<path d="M22 160l-2 5-5 1 4 3-1 5 4-3 4 3-1-5 4-3-5-1z" fill="#c6c6c6" stroke="none"/>
<path d="M25 170l12 11" stroke-width="3"/>
<!-- crop -->
<path d="M19 194v15h17M16 199h16v14M36 194l-16 16" stroke-width="2.2"/>
<!-- eyedropper -->
<path d="M31 235l4-4 3 3-4 4z" fill="#c6c6c6" stroke="none"/>
<path d="M31 238l-12 12-3 1 1-3 12-12" stroke-width="1.7"/>
<path d="M29 233l6 6" stroke-width="2.5"/>
<path d="M12 264h30" stroke="#3a3a3a" stroke-width="2"/>
<!-- heal -->
<path d="M17 294l14-14 5 5-14 14z" fill="#c6c6c6" stroke="none"/>
<path d="M17 283a6 6 0 0 0 2 13" stroke-width="1.4" stroke-dasharray="1.5 1.5"/>
<!-- brush -->
<path d="M38 310l-13 13" stroke-width="2.5"/>
<path d="M24 322q-4 0-5 4q-1 3-3 4q6 1 9-2q2-3-1-6z" fill="#c6c6c6" stroke="none"/>
<!-- stamp -->
<path d="M24 348a3.5 3.5 0 1 1 5 0l-1 5h4v4H20v-4h5z M17 360h19v2H17z" fill="#c6c6c6" stroke="none"/>
<!-- history brush -->
<path d="M36 385l-11 10" stroke-width="2.5"/>
<path d="M24 394q-4 0-5 4q-1 3-3 4q6 1 9-2q2-3-1-6z" fill="#c6c6c6" stroke="none"/>
<path d="M17 385q2-4 7-3" stroke-width="1.5"/>
<!-- eraser -->
<path d="M16 438l10-13h12l-10 13z" fill="#c6c6c6" stroke="none"/>
<path d="M16 438l2-4h8" stroke="#545454" stroke-width="1.2"/>
<!-- gradient -->
<rect x="17" y="461" width="20" height="15" stroke-width="1.2"/>
<rect x="18" y="462" width="18" height="13" fill="url(#gr)" stroke="none"/>
<!-- blur drop -->
<path d="M27 496q-7 9-7 13a7 7 0 0 0 14 0q0-4-7-13z" fill="#c6c6c6" stroke="none"/>
<!-- dodge -->
<circle cx="24" cy="541" r="6" fill="#c6c6c6" stroke="none"/>
<path d="M28 545l8 8" stroke-width="2.5"/>
<path d="M12 563h30" stroke="#3a3a3a" stroke-width="2"/>
<!-- pen -->
<path d="M20 593l4-12 9-6 4 4-6 9z" fill="#c6c6c6" stroke="none"/>
<path d="M17 596l8-8" stroke="#545454" stroke-width="1.3"/>
<circle cx="29" cy="584" r="1.5" fill="#545454" stroke="none"/>
</g>
<defs><linearGradient id="gr"><stop offset="0" stop-color="#e8e8e8"/><stop offset="1" stop-color="#3a3a3a"/></linearGradient></defs>
<rect x="4" y="605" width="44" height="33" rx="3" fill="#333" stroke="#2a2a2a"/>
<text x="16" y="631" font-family="Liberation Serif" font-size="26" fill="#d0d0d0">T</text>
<g fill="none" stroke="#c6c6c6">
<!-- path select -->
<path d="M20 650v17l4-4 4 7 2-1-4-7 6 0z" fill="#c6c6c6" stroke="none"/>
<!-- shape -->
<rect x="16" y="687" width="21" height="16" rx="5" fill="#c6c6c6" stroke="none"/>
<path d="M12 716h30" stroke="#3a3a3a" stroke-width="2"/>
<!-- hand -->
<path d="M18 737v-8a2 2 0 0 1 3 0v6v-10a2 2 0 0 1 3 0v9v-10a2 2 0 0 1 3 0v10v-8a2 2 0 0 1 3 0v10l2-3a2 2 0 0 1 3 2l-4 8q-2 4-7 4h-2q-5 0-6-5z" fill="#c6c6c6" stroke="none"/>
<!-- zoom -->
<circle cx="24" cy="771" r="6.5" stroke-width="2.4"/>
<path d="M29 776l7 7" stroke-width="3"/>
<!-- default colors -->
<rect x="5" y="797" width="8" height="8" fill="#111" stroke="#ccc" stroke-width="1"/>
<rect x="9" y="801" width="8" height="8" fill="#ccc" stroke="none"/>
<path d="M32 798q6 0 6 6M30 798l3-2v4zM38 806l-2 3 4 0z" stroke-width="1.4"/>
</g>
<rect x="19.5" y="834.5" width="25" height="25" fill="#fff" stroke="#222"/>
<rect x="5.5" y="820.5" width="25" height="25" fill="#000" stroke="#e8e8e8"/>
<g fill="none" stroke="#c6c6c6">
<rect x="14" y="874" width="22" height="16" stroke-width="1.6"/>
<circle cx="25" cy="882" r="4.5" stroke-width="1.2" stroke-dasharray="1.3 1.3"/>
<rect x="22" y="911" width="17" height="13" stroke-width="1.6"/>
<rect x="15" y="916" width="17" height="13" fill="#545454" stroke-width="1.6"/>
</g>
<g fill="#c6c6c6">
<path d="M40 108v-5l-5 5z M40 146v-5l-5 5z M40 183v-5l-5 5z M40 219v-5l-5 5z M40 257v-5l-5 5z M40 298v-5l-5 5z M40 336v-5l-5 5z M40 373v-5l-5 5z M40 411v-5l-5 5z M40 447v-5l-5 5z M40 484v-5l-5 5z M40 522v-5l-5 5z M40 557v-5l-5 5z M40 599v-5l-5 5z M40 635v-5l-5 5z M40 672v-5l-5 5z M40 709v-5l-5 5z M40 750v-5l-5 5z M40 786v-5l-5 5z M40 933v-5l-5 5z"/>
</g>
</svg>
<!-- small left panel -->
<div class="a" style="left:0;top:422px;width:54px;height:115px;background:#545454;border-radius:0 3px 0 0"></div>
<div class="a" style="left:0;top:422px;width:54px;height:18px;background:#3b3b3b;border-radius:0 3px 0 0"></div>
<svg class="a" style="left:0;top:422px" width="54" height="115" viewBox="0 0 54 115">
<path d="M8 5l6 6M14 5l-6 6" stroke="#c6c6c6" stroke-width="2"/>
<path d="M36 5l4 4-4 4z M41 5l4 4-4 4z" fill="#c6c6c6"/>
<path d="M12 27h30" stroke="#2e2e2e" stroke-width="3" stroke-dasharray="1 1.5"/>
<rect x="17" y="41" width="21" height="22" rx="2" fill="#c6c6c6"/>
<path d="M20 46h8M20 50h8M20 54h8M20 58h15" stroke="#545454" stroke-width="1.5"/><rect x="30" y="45" width="5" height="6" fill="#545454"/>
<path d="M17 79h21v15l-6 6H17z" fill="#c6c6c6"/>
<path d="M20 85h14M20 89h14M20 93h9" stroke="#545454" stroke-width="1.5"/>
</svg>
<!--BGP-->
<!-- bottom band right of status -->
<div class="a" style="left:381px;top:1226px;width:1659px;height:22px;background:linear-gradient(#2c2c2c,#3a3a3a)"></div>
<!-- history panel (behind layers) -->
<div class="a" style="left:1940px;top:657px;width:108px;height:198px;background:#535353;overflow:hidden">
<div class="a" style="left:0;top:0;width:108px;height:18px;background:#3a3a3a"></div>
<div class="a" style="left:0;top:18px;width:108px;height:25px;background:#444;border-bottom:1px solid #333"></div>
<div class="a" style="left:0;top:43px;width:108px;height:18px;background:#4d4d4d;border-bottom:1px solid #3a3a3a;overflow:hidden"><div class="a" style="left:14px;top:-14px;color:#ddd;font-weight:bold;font-size:15px;white-space:nowrap">Type Tool</div></div>
<div class="a" style="left:0;top:61px;width:108px;height:32px;border-bottom:1px solid #3a3a3a"></div>
<div class="a" style="left:14px;top:67px;color:#e8e8e8;font-weight:bold;font-size:14px;white-space:nowrap">Move</div>
<div class="a" style="left:0;top:93px;width:108px;height:33px;border-bottom:1px solid #3a3a3a"></div>
<div class="a" style="left:13px;top:100px;color:#e8e8e8;font-weight:bold;font-size:14px;white-space:nowrap">Edit Type Layer</div>
<div class="a" style="left:0;top:126px;width:108px;height:32px;background:#56687e;border-bottom:1px solid #3a3a3a"></div>
<div class="a" style="left:14px;top:133px;color:#eaeaea;font-weight:bold;font-size:14px;white-space:nowrap">Move</div>
<div class="a" style="left:0;top:159px;width:108px;height:27px;background:#4a4a4a;border-bottom:1px solid #3a3a3a"></div>
<svg class="a" style="left:88px;top:165px" width="20" height="16" viewBox="0 0 20 16"><path d="M2 9h9M6.500 4.500v9" stroke="#ddd" stroke-width="2.500"/><rect x="9" y="1" width="11" height="11" fill="#ccc"/><path d="M12 4h8M12 8h8" stroke="#535353" stroke-width="1"/></svg>
<div class="a" style="left:0;top:186px;width:108px;height:12px;background:#474747"></div>
<div class="a" style="left:70px;top:189px;width:28px;height:5px;background:repeating-linear-gradient(90deg,#222 0 1px,transparent 1px 3px)"></div>
</div>
<!-- right strip shading -->
<div class="a" style="left:2018px;top:165px;width:22px;height:492px;background:linear-gradient(90deg,#2e2e2e,#3e3e3e 60%,#454545)"></div>
<div class="a" style="left:2018px;top:855px;width:22px;height:193px;background:linear-gradient(90deg,#2e2e2e,#3e3e3e 60%,#454545)"></div>
<!-- paragraph panel -->
<div class="a" style="left:1873px;top:1048px;width:175px;height:196px;background:#535353;overflow:hidden">
<div class="a" style="left:0;top:0;width:175px;height:18px;background:#383838"></div>
<div class="a" style="left:0;top:18px;width:175px;height:25px;background:#424242;border-bottom:1px solid #333"></div>
<svg class="a" style="left:90px;top:56px" width="85" height="26" viewBox="0 0 85 26"><path d="M8 2h16M8 6h16M8 10h16M8 14h16M8 18h16M8 22h16" stroke="#cfcfcf" stroke-width="1.6"/><path d="M52 2h22M52 6h22M52 10h22M52 14h22M52 18h22M52 22h13" stroke="#cfcfcf" stroke-width="1.6"/><path d="M80 2h10M80 6h10M80 10h10M80 14h10" stroke="#cfcfcf" stroke-width="1.6"/></svg>
<div class="a" style="left:0;top:91px;width:175px;height:1px;background:#444"></div>
<div class="a" style="left:94px;top:97px;width:25px;height:25px;background:#333;border:1px solid #3e3e3e"></div>
<svg class="a" style="left:157px;top:98px" width="20" height="24" viewBox="0 0 20 24"><path d="M1 3h9M1 7h9M1 11h9M1 15h9M1 19h9" stroke="#cfcfcf" stroke-width="1.5"/><path d="M12 1v22M20 11h-6l3-3M14 11l3 3" stroke="#cfcfcf" stroke-width="1.5" fill="none"/></svg>
<div class="a" style="left:0;top:125px;width:175px;height:1px;background:#444"></div>
<svg class="a" style="left:10px;top:128px" width="24" height="24" viewBox="0 0 24 24"><path d="M0 5h7l-2-2M7 5l-2 2" stroke="#cfcfcf" stroke-width="1.4" fill="none"/><path d="M9 8h12M9 12h12M9 16h12M9 20h12" stroke="#cfcfcf" stroke-width="1.5"/></svg>
<div class="a" style="left:42px;top:133px;width:77px;height:23px;background:#333;border:1px solid #3e3e3e;color:#ececec;font-size:15px;line-height:21px;padding-left:5px">0 pt</div>
<div class="a" style="left:0;top:163px;width:175px;height:1px;background:#444"></div>
<svg class="a" style="left:10px;top:167px" width="24" height="24" viewBox="0 0 24 24"><path d="M0 5h7l-2-2M7 5l-2 2" stroke="#cfcfcf" stroke-width="1.4" fill="none"/><rect x="9" y="3" width="12" height="5" fill="#cfcfcf"/><path d="M9 12h12M9 16h12M9 20h12" stroke="#cfcfcf" stroke-width="1.5"/></svg>
<div class="a" style="left:42px;top:171px;width:77px;height:23px;background:#333;border:1px solid #3e3e3e;color:#ececec;font-size:15px;line-height:21px;padding-left:5px">0 pt</div>
<svg class="a" style="left:155px;top:172px" width="20" height="22" viewBox="0 0 20 22"><path d="M6 2h14M6 6h14M6 10h14" stroke="#cfcfcf" stroke-width="1.5"/><rect x="8" y="14" width="12" height="6" fill="#cfcfcf"/><path d="M0 17h6l-2-2M6 17l-2 2" stroke="#cfcfcf" stroke-width="1.4" fill="none"/></svg>
</div>
<!-- styles panel -->
<div class="a" style="left:1563px;top:1246px;width:257px;height:34px;background:#3c3c3c;border-radius:3px 3px 0 0;box-shadow:0 0 2px #1a1a1a">
<div class="a" style="left:0;top:0;width:257px;height:18px;background:#363636;border-radius:3px 3px 0 0"></div>
<svg class="a" style="left:7px;top:4px" width="12" height="12" viewBox="0 0 12 12"><path d="M2 2l8 8M10 2l-8 8" stroke="#d0d0d0" stroke-width="2"/></svg>
<div class="a" style="left:1px;top:19px;width:56px;height:15px;background:#4e4e4e;color:#e0e0e0;font-weight:bold;font-size:14px;line-height:22px;padding-left:9px;overflow:hidden">Styles</div>
</div>
<!-- navigator panel -->
<div class="a" style="left:1821px;top:1246px;width:227px;height:34px;background:#3c3c3c;border-radius:3px 0 0 0;box-shadow:0 0 2px #1a1a1a">
<div class="a" style="left:0;top:0;width:227px;height:18px;background:#363636;border-radius:3px 0 0 0"></div>
<svg class="a" style="left:7px;top:4px" width="12" height="12" viewBox="0 0 12 12"><path d="M2 2l8 8M10 2l-8 8" stroke="#d0d0d0" stroke-width="2"/></svg>
<div class="a" style="left:1px;top:19px;width:81px;height:15px;background:#3f3f3f;color:#9c9c9c;font-weight:bold;font-size:14px;line-height:22px;padding-left:9px;overflow:hidden">Navigator</div>
<div class="a" style="left:83px;top:19px;width:80px;height:15px;background:#4e4e4e;color:#e8e8e8;font-weight:bold;font-size:14px;line-height:22px;padding-left:9px;overflow:hidden">Channels</div>
</div>

<!--/BGP-->
<!--LAYERS-->
<div class="a" style="left:1660px;top:361px;width:307px;height:819px;background:#535353;box-shadow:0 0 3px #161616">
<div class="a" style="left:0;top:0;width:307px;height:19px;background:#3a3a3a;border-bottom:1px solid #2c2c2c"></div>
<svg class="a" style="left:6px;top:4px" width="12" height="12" viewBox="0 0 12 12"><path d="M2 2l8 8M10 2l-8 8" stroke="#c8c8c8" stroke-width="2"/></svg>
<svg class="a" style="left:288px;top:5px" width="14" height="10" viewBox="0 0 14 10"><path d="M6 0v10L1 5z M13 0v10L8 5z" fill="#c8c8c8"/></svg>
<div class="a" style="left:0;top:19px;width:307px;height:24px;background:#3d3d3d;border-bottom:1px solid #2e2e2e"></div>
<div class="a" style="left:1px;top:20px;width:53px;height:23px;background:#474747;color:#aaa;font-size:14px;line-height:23px;padding-left:9px">Paths</div>
<div class="a" style="left:55px;top:20px;width:61px;height:24px;background:#535353;color:#e4e4e4;font-weight:bold;font-size:14px;line-height:23px;padding-left:9px">Layers</div>
<svg class="a" style="left:280px;top:25px" width="24" height="13" viewBox="0 0 24 13"><path d="M0 4h7l-3.5 4z" fill="#c8c8c8"/><path d="M9 1.5h13M9 6h13M9 10.5h13" stroke="#c8c8c8" stroke-width="1.6"/></svg>
<div class="a" style="left:7px;top:51px;width:89px;height:23px;background:linear-gradient(#5e5e5e,#565656);border:1px solid #444;border-radius:3px;color:#9a9a9a;font-size:14px;line-height:21px;padding-left:27px">Kind</div>
<svg class="a" style="left:14px;top:55px" width="16" height="16" viewBox="0 0 16 16"><circle cx="9.5" cy="6.5" r="4.5" stroke="#999" stroke-width="1.6" fill="none"/><path d="M6 10l-4.500 4.500" stroke="#999" stroke-width="2"/></svg>
<svg class="a" style="left:80px;top:55px" width="10" height="15" viewBox="0 0 10 15"><path d="M1 6l4-5 4 5zM1 9l4 5 4-5z" fill="#999"/></svg>
<svg class="a" style="left:111px;top:53px" width="200" height="22" viewBox="0 0 200 22"><rect x="1.5" y="3.5" width="17" height="14" stroke="#8e8e8e" stroke-width="1.5" fill="none"/><path d="M4 15l4-5 3 3 2-2 3 4z" fill="#8e8e8e"/><circle cx="13" cy="7.500" r="1.500" fill="#8e8e8e"/><circle cx="44" cy="10.5" r="7.5" fill="#8e8e8e"/><path d="M40 14l8-8" stroke="#535353" stroke-width="1.6"/><text x="70" y="18" font-family="Liberation Serif" font-size="21" fill="#8e8e8e">T</text><rect x="104" y="4" width="14" height="13" stroke="#8e8e8e" stroke-width="1.5" fill="none"/><rect x="102" y="2" width="4" height="4" fill="#8e8e8e"/><rect x="116" y="2" width="4" height="4" fill="#8e8e8e"/><rect x="102" y="15" width="4" height="4" fill="#8e8e8e"/><rect x="116" y="15" width="4" height="4" fill="#8e8e8e"/><path d="M141 4h6l4 4v11h-10z" stroke="#8e8e8e" stroke-width="1.4" fill="none"/><rect x="137" y="12" width="8" height="8" fill="#8e8e8e"/><rect x="173" y="1" width="12" height="20" rx="1" fill="#444"/><rect x="174" y="2" width="10" height="8" fill="#6d6d6d"/></svg>
<div class="a" style="left:0;top:82px;width:307px;height:1px;background:#454545"></div>
<div class="a" style="left:6px;top:93px;width:157px;height:24px;background:linear-gradient(#666,#595959);border:1px solid #363636;border-radius:3px;color:#e8e8e8;font-size:14px;line-height:20px;padding-left:8px">Normal</div>
<svg class="a" style="left:146px;top:97px" width="10" height="15" viewBox="0 0 10 15"><path d="M1 6l4-5 4 5zM1 9l4 5 4-5z" fill="#e0e0e0"/></svg>
<div class="a" style="left:170px;top:96px;color:#e0e0e0;font-size:14px">Opacity:</div>
<div class="a" style="left:228px;top:92px;width:70px;height:24px;background:#2b2b2b;border:1px solid #3c3c3c;border-radius:3px;color:#eee;font-size:14px;line-height:22px;padding-left:5px">100%<div class="a" style="left:47px;top:0;width:21px;height:22px;background:linear-gradient(#6c6c6c,#5a5a5a);border-radius:0 3px 3px 0"><div class="a" style="left:6px;top:9px;border-left:4px solid transparent;border-right:4px solid transparent;border-top:5px solid #ddd"></div></div></div>
<div class="a" style="left:0;top:121px;width:307px;height:1px;background:#454545"></div>
<div class="a" style="left:7px;top:135px;color:#a0a0a0;font-size:14px">Lock:</div>
<svg class="a" style="left:50px;top:131px" width="170" height="24" viewBox="0 0 170 24"><rect x="2" y="4" width="16" height="16" fill="#6e6e6e"/><path d="M2 4h4v4H2zM10 4h4v4h-4zM6 8h4v4H6zM14 8h4v4h-4zM2 12h4v4H2zM10 12h4v4h-4zM6 16h4v4H6zM14 16h4v4h-4z" fill="#8a8a8a"/><path d="M47 3L36 15" stroke="#8e8e8e" stroke-width="2.5"/><path d="M36 14q-4 0-5 4q-1 3-4 4q7 1 10-2q2-3-1-6z" fill="#8e8e8e"/><path d="M71 2v20M61 12h20M68 5l3-3 3 3M68 19l3 3 3-3M64 9l-3 3 3 3M78 9l3 3-3 3" stroke="#8e8e8e" stroke-width="1.6" fill="none"/><path d="M99 11V7a4.500 4.500 0 0 1 9 0v4" stroke="#8e8e8e" stroke-width="2" fill="none"/><rect x="96" y="11" width="15" height="11" rx="1" fill="#8e8e8e"/><rect x="102" y="14" width="3" height="5" fill="#535353"/></svg>
<div class="a" style="left:200px;top:135px;color:#e0e0e0;font-size:14px">Fill:</div>
<div class="a" style="left:228px;top:132px;width:70px;height:24px;background:#2b2b2b;border:1px solid #3c3c3c;border-radius:3px;color:#eee;font-size:14px;line-height:22px;padding-left:5px">100%<div class="a" style="left:47px;top:0;width:21px;height:22px;background:linear-gradient(#6c6c6c,#5a5a5a);border-radius:0 3px 3px 0"><div class="a" style="left:6px;top:9px;border-left:4px solid transparent;border-right:4px solid transparent;border-top:5px solid #ddd"></div></div></div>
<div class="a" style="left:0;top:163px;width:307px;height:617px;overflow:hidden;background:#535353;border-top:1px solid #3c3c3c">
<div class="a" style="left:43px;top:0px;width:243px;height:33px;background:#535353"></div>
<div class="a" style="left:0;top:32px;width:286px;height:2px;background:#3b3b3b"></div>
<svg class="a" style="left:11px;top:9px" width="20" height="14" viewBox="0 0 20 14"><path d="M1 7q9-10 18 0q-9 10-18 0z" fill="#a9a9a9"/><circle cx="10" cy="7" r="4" fill="#2a2a2a"/><circle cx="11.3" cy="5.6" r="1.3" fill="#bbb"/></svg>
<div class="a" style="left:48px;top:12px;border-left:6px solid transparent;border-right:6px solid transparent;border-top:9px solid #e0e0e0"></div>
<svg class="a" style="left:65px;top:7px" width="26" height="18" viewBox="0 0 26 18"><path d="M1 2h9l2 2h12v13H1z" fill="#a8a8a8"/><path d="M1 7h24v10H1z" fill="#c6c6c6"/></svg>
<div class="a" style="left:103px;top:10px;color:#e4e4e4;font-size:14px">Group 1</div>
<div class="a" style="left:43px;top:33px;width:243px;height:56px;background:#535353"></div>
<div class="a" style="left:0;top:88px;width:286px;height:2px;background:#3b3b3b"></div>
<svg class="a" style="left:11px;top:54px" width="20" height="14" viewBox="0 0 20 14"><path d="M1 7q9-10 18 0q-9 10-18 0z" fill="#a9a9a9"/><circle cx="10" cy="7" r="4" fill="#2a2a2a"/><circle cx="11.3" cy="5.6" r="1.3" fill="#bbb"/></svg>
<svg class="a" style="left:80px;top:49px" width="26" height="24" viewBox="0 0 26 24"><defs><linearGradient id="tg61" x1="0" y1="0" x2="0" y2="1"><stop offset="0" stop-color="#e8e8e8"/><stop offset="1" stop-color="#9a9a9a"/></linearGradient></defs><path d="M1 1h24v7h-1.3q-.6-4.6-4.7-4.8h-4v17.3l3.200.8v1.700H7.800v-1.700l3.200-.8V3.200H7q-4.100.2-4.700 4.800H1z" fill="url(#tg61)"/></svg>
<div class="a" style="left:131px;top:55px;color:#e0e0e0;font-size:13.5px;transform:scaleX(0.9);transform-origin:0 0;white-space:nowrap;letter-spacing:-0.2px">The last time I saw Pari...</div>
<div class="a" style="left:43px;top:88px;width:243px;height:56px;background:#535353"></div>
<div class="a" style="left:0;top:143px;width:286px;height:2px;background:#3b3b3b"></div>
<svg class="a" style="left:11px;top:109px" width="20" height="14" viewBox="0 0 20 14"><path d="M1 7q9-10 18 0q-9 10-18 0z" fill="#a9a9a9"/><circle cx="10" cy="7" r="4" fill="#2a2a2a"/><circle cx="11.3" cy="5.6" r="1.3" fill="#bbb"/></svg>
<svg class="a" style="left:80px;top:104px" width="26" height="24" viewBox="0 0 26 24"><defs><linearGradient id="tg116" x1="0" y1="0" x2="0" y2="1"><stop offset="0" stop-color="#e8e8e8"/><stop offset="1" stop-color="#9a9a9a"/></linearGradient></defs><path d="M1 1h24v7h-1.3q-.6-4.6-4.7-4.8h-4v17.3l3.200.8v1.700H7.800v-1.700l3.200-.8V3.200H7q-4.100.2-4.700 4.800H1z" fill="url(#tg116)"/></svg>
<div class="a" style="left:131px;top:110px;color:#e0e0e0;font-size:13.5px;transform:scaleX(0.9);transform-origin:0 0;white-space:nowrap;letter-spacing:-0.2px">Your  Restaurant Name ...</div>
<div class="a" style="left:43px;top:144px;width:243px;height:56px;background:#56687e"></div>
<div class="a" style="left:0;top:199px;width:286px;height:2px;background:#3b3b3b"></div>
<svg class="a" style="left:11px;top:165px" width="20" height="14" viewBox="0 0 20 14"><path d="M1 7q9-10 18 0q-9 10-18 0z" fill="#a9a9a9"/><circle cx="10" cy="7" r="4" fill="#2a2a2a"/><circle cx="11.3" cy="5.6" r="1.3" fill="#bbb"/></svg>
<svg class="a" style="left:80px;top:160px" width="26" height="24" viewBox="0 0 26 24"><defs><linearGradient id="tg172" x1="0" y1="0" x2="0" y2="1"><stop offset="0" stop-color="#e8e8e8"/><stop offset="1" stop-color="#9a9a9a"/></linearGradient></defs><path d="M1 1h24v7h-1.3q-.6-4.6-4.7-4.8h-4v17.3l3.200.8v1.700H7.800v-1.700l3.200-.8V3.200H7q-4.100.2-4.700 4.800H1z" fill="url(#tg172)"/></svg>
<svg class="a" style="left:68px;top:146px" width="52" height="52" viewBox="0 0 52 52"><path d="M1 12V1h16M35 1h16v11M51 40v11H35M17 51H1V40" stroke="#e8e8e8" stroke-width="2" fill="none"/></svg>
<div class="a" style="left:131px;top:166px;color:#e0e0e0;font-size:13.5px;transform:scaleX(0.9);transform-origin:0 0;white-space:nowrap;letter-spacing:-0.2px">make a reservation &nbsp; ac...</div>
<div class="a" style="left:43px;top:200px;width:243px;height:56px;background:#535353"></div>
<div class="a" style="left:0;top:255px;width:286px;height:2px;background:#3b3b3b"></div>
<svg class="a" style="left:11px;top:221px" width="20" height="14" viewBox="0 0 20 14"><path d="M1 7q9-10 18 0q-9 10-18 0z" fill="#a9a9a9"/><circle cx="10" cy="7" r="4" fill="#2a2a2a"/><circle cx="11.3" cy="5.6" r="1.3" fill="#bbb"/></svg>
<svg class="a" style="left:80px;top:216px" width="26" height="24" viewBox="0 0 26 24"><defs><linearGradient id="tg228" x1="0" y1="0" x2="0" y2="1"><stop offset="0" stop-color="#e8e8e8"/><stop offset="1" stop-color="#9a9a9a"/></linearGradient></defs><path d="M1 1h24v7h-1.3q-.6-4.6-4.7-4.8h-4v17.3l3.200.8v1.700H7.800v-1.700l3.200-.8V3.200H7q-4.100.2-4.700 4.800H1z" fill="url(#tg228)"/></svg>
<div class="a" style="left:127px;top:220px;color:#e8e8e8;font-size:14px">your image</div>
<div class="a" style="left:43px;top:255px;width:243px;height:56px;background:#535353"></div>
<div class="a" style="left:0;top:310px;width:286px;height:2px;background:#3b3b3b"></div>
<svg class="a" style="left:11px;top:276px" width="20" height="14" viewBox="0 0 20 14"><path d="M1 7q9-10 18 0q-9 10-18 0z" fill="#a9a9a9"/><circle cx="10" cy="7" r="4" fill="#2a2a2a"/><circle cx="11.3" cy="5.6" r="1.3" fill="#bbb"/></svg>
<div class="a" style="left:71px;top:261px;width:32px;height:44px;border:2px solid #111;background:#fff;background-image:linear-gradient(45deg,#ccc 25%,transparent 25%,transparent 75%,#ccc 75%),linear-gradient(45deg,#ccc 25%,transparent 25%,transparent 75%,#ccc 75%);background-size:10px 10px;background-position:0 0,5px 5px"></div>
<div class="a" style="left:85px;top:287px;width:20px;height:20px;background:#535353"></div>
<svg class="a" style="left:86px;top:289px" width="16" height="16" viewBox="0 0 16 16"><rect x="3" y="3" width="10" height="10" stroke="#ccc" stroke-width="1.2" fill="none"/><rect x="1" y="1" width="4" height="4" fill="#ccc"/><rect x="11" y="1" width="4" height="4" fill="#ccc"/><rect x="1" y="11" width="4" height="4" fill="#ccc"/><rect x="11" y="11" width="4" height="4" fill="#ccc"/></svg>
<div class="a" style="left:114px;top:275px;color:#e8e8e8;font-size:14px">Rectangle 4</div>
<div class="a" style="left:43px;top:310px;width:243px;height:56px;background:#535353"></div>
<div class="a" style="left:0;top:365px;width:286px;height:2px;background:#3b3b3b"></div>
<svg class="a" style="left:11px;top:331px" width="20" height="14" viewBox="0 0 20 14"><path d="M1 7q9-10 18 0q-9 10-18 0z" fill="#a9a9a9"/><circle cx="10" cy="7" r="4" fill="#2a2a2a"/><circle cx="11.3" cy="5.6" r="1.3" fill="#bbb"/></svg>
<svg class="a" style="left:80px;top:326px" width="26" height="24" viewBox="0 0 26 24"><defs><linearGradient id="tg338" x1="0" y1="0" x2="0" y2="1"><stop offset="0" stop-color="#e8e8e8"/><stop offset="1" stop-color="#9a9a9a"/></linearGradient></defs><path d="M1 1h24v7h-1.3q-.6-4.6-4.7-4.8h-4v17.3l3.200.8v1.700H7.800v-1.700l3.200-.8V3.200H7q-4.100.2-4.700 4.800H1z" fill="url(#tg338)"/></svg>
<div class="a" style="left:131px;top:332px;color:#e0e0e0;font-size:13.5px;transform:scaleX(0.9);transform-origin:0 0;white-space:nowrap;letter-spacing:-0.2px">Lunch Monday to Satur...</div>
<div class="a" style="left:43px;top:366px;width:243px;height:56px;background:#535353"></div>
<div class="a" style="left:0;top:421px;width:286px;height:2px;background:#3b3b3b"></div>
<div class="a" style="left:12px;top:386px;width:16px;height:16px;border:1px solid #3c3c3c;background:#4e4e4e"></div>
<svg class="a" style="left:75px;top:388px" width="12" height="14" viewBox="0 0 12 14"><path d="M2 1h6v9" stroke="#ddd" stroke-width="1.6" fill="none"/><path d="M4 9h8l-4 4z" fill="#ddd"/></svg>
<svg class="a" style="left:94px;top:372px" width="34" height="44" viewBox="0 0 34 44"><rect width="34" height="44" fill="#1a1a1a"/><rect x="2" y="2" width="30" height="40" fill="#b08a50"/><path d="M6 42V16q0-11 11-11t11 11v26z" fill="#2a2a22"/><path d="M8 15q0-8 9-8t9 8z" fill="#7a9ab0"/><rect x="4" y="13" width="26" height="6" fill="#3a7ac0"/><rect x="5" y="14" width="24" height="2" fill="#dde"/><rect x="5" y="22" width="6" height="10" fill="#4a7a3a"/><rect x="10" y="34" width="16" height="6" fill="#c8a878"/></svg>
<div class="a" style="left:140px;top:386px;color:#e8e8e8;font-size:14px">Layer 5</div>
<div class="a" style="left:43px;top:422px;width:243px;height:56px;background:#535353"></div>
<div class="a" style="left:0;top:477px;width:286px;height:2px;background:#3b3b3b"></div>
<svg class="a" style="left:11px;top:443px" width="20" height="14" viewBox="0 0 20 14"><path d="M1 7q9-10 18 0q-9 10-18 0z" fill="#a9a9a9"/><circle cx="10" cy="7" r="4" fill="#2a2a2a"/><circle cx="11.3" cy="5.6" r="1.3" fill="#bbb"/></svg>
<div class="a" style="left:71px;top:428px;width:32px;height:45px;border:2px solid #1a1a1a;background:#fff"></div>
<div class="a" style="left:115px;top:442px;color:#e8e8e8;font-size:14px;text-decoration:underline">Layer 4</div>
<div class="a" style="left:43px;top:477px;width:243px;height:56px;background:#535353"></div>
<div class="a" style="left:0;top:532px;width:286px;height:2px;background:#3b3b3b"></div>
<svg class="a" style="left:11px;top:498px" width="20" height="14" viewBox="0 0 20 14"><path d="M1 7q9-10 18 0q-9 10-18 0z" fill="#a9a9a9"/><circle cx="10" cy="7" r="4" fill="#2a2a2a"/><circle cx="11.3" cy="5.6" r="1.3" fill="#bbb"/></svg>
<div class="a" style="left:71px;top:482px;width:45px;height:45px;border:2px solid #111;background:#fff;background-image:linear-gradient(45deg,#ccc 25%,transparent 25%,transparent 75%,#ccc 75%),linear-gradient(45deg,#ccc 25%,transparent 25%,transparent 75%,#ccc 75%);background-size:10px 10px,10px 10px;background-position:0 0,5px 5px"></div>
<svg class="a" style="left:73px;top:484px" width="41" height="41" viewBox="0 0 41 41"><circle cx="0" cy="0.0" r="1.1" fill="#1a1a1a"/><circle cx="37" cy="8.049999999999999" r="1.1" fill="#1a1a1a"/><circle cx="33" cy="1.75" r="1.1" fill="#1a1a1a"/><circle cx="29" cy="9.799999999999999" r="1.1" fill="#1a1a1a"/><circle cx="25" cy="3.5" r="1.1" fill="#1a1a1a"/><circle cx="21" cy="11.549999999999999" r="1.1" fill="#1a1a1a"/><circle cx="17" cy="5.25" r="1.1" fill="#1a1a1a"/><circle cx="13" cy="13.299999999999999" r="1.1" fill="#1a1a1a"/><circle cx="9" cy="7.0" r="1.1" fill="#1a1a1a"/><circle cx="5" cy="0.7" r="1.1" fill="#1a1a1a"/><circle cx="1" cy="8.75" r="1.1" fill="#1a1a1a"/><circle cx="38" cy="2.4499999999999997" r="1.1" fill="#1a1a1a"/><circle cx="34" cy="10.5" r="1.1" fill="#1a1a1a"/><circle cx="30" cy="4.199999999999999" r="1.1" fill="#1a1a1a"/><circle cx="26" cy="12.25" r="1.1" fill="#1a1a1a"/><circle cx="22" cy="5.949999999999999" r="1.1" fill="#1a1a1a"/><circle cx="18" cy="14.0" r="1.1" fill="#1a1a1a"/><circle cx="14" cy="7.699999999999999" r="1.1" fill="#1a1a1a"/><circle cx="10" cy="1.4" r="1.1" fill="#1a1a1a"/><circle cx="6" cy="9.45" r="1.1" fill="#1a1a1a"/><circle cx="2" cy="3.15" r="1.1" fill="#1a1a1a"/><circle cx="39" cy="11.2" r="1.1" fill="#1a1a1a"/><circle cx="35" cy="4.8999999999999995" r="1.1" fill="#1a1a1a"/><circle cx="31" cy="12.95" r="1.1" fill="#1a1a1a"/><circle cx="27" cy="6.6499999999999995" r="1.1" fill="#1a1a1a"/><circle cx="23" cy="0.35" r="1.1" fill="#1a1a1a"/><circle cx="19" cy="8.399999999999999" r="1.1" fill="#1a1a1a"/><circle cx="15" cy="2.0999999999999996" r="1.1" fill="#1a1a1a"/><circle cx="11" cy="10.149999999999999" r="1.1" fill="#1a1a1a"/><circle cx="7" cy="3.8499999999999996" r="1.1" fill="#1a1a1a"/><circle cx="3" cy="11.899999999999999" r="1.1" fill="#1a1a1a"/><circle cx="40" cy="5.6" r="1.1" fill="#1a1a1a"/><circle cx="36" cy="13.649999999999999" r="1.1" fill="#1a1a1a"/><circle cx="32" cy="7.35" r="1.1" fill="#1a1a1a"/><circle cx="28" cy="1.0499999999999998" r="1.1" fill="#1a1a1a"/><circle cx="24" cy="9.1" r="1.1" fill="#1a1a1a"/><circle cx="20" cy="2.8" r="1.1" fill="#1a1a1a"/><circle cx="16" cy="10.85" r="1.1" fill="#1a1a1a"/><circle cx="12" cy="4.55" r="1.1" fill="#1a1a1a"/><circle cx="8" cy="12.6" r="1.1" fill="#1a1a1a"/><circle cx="4" cy="6.3" r="1.1" fill="#1a1a1a"/><circle cx="0" cy="0.0" r="1.1" fill="#1a1a1a"/><circle cx="37" cy="8.049999999999999" r="1.1" fill="#1a1a1a"/><circle cx="33" cy="1.75" r="1.1" fill="#1a1a1a"/><circle cx="29" cy="9.799999999999999" r="1.1" fill="#1a1a1a"/><circle cx="25" cy="3.5" r="1.1" fill="#1a1a1a"/><circle cx="21" cy="11.549999999999999" r="1.1" fill="#1a1a1a"/><circle cx="17" cy="5.25" r="1.1" fill="#1a1a1a"/><circle cx="13" cy="13.299999999999999" r="1.1" fill="#1a1a1a"/><circle cx="9" cy="7.0" r="1.1" fill="#1a1a1a"/><circle cx="5" cy="0.7" r="1.1" fill="#1a1a1a"/><circle cx="1" cy="8.75" r="1.1" fill="#1a1a1a"/><circle cx="38" cy="2.4499999999999997" r="1.1" fill="#1a1a1a"/><circle cx="34" cy="10.5" r="1.1" fill="#1a1a1a"/><circle cx="30" cy="4.199999999999999" r="1.1" fill="#1a1a1a"/><circle cx="26" cy="12.25" r="1.1" fill="#1a1a1a"/><circle cx="22" cy="5.949999999999999" r="1.1" fill="#1a1a1a"/><circle cx="18" cy="14.0" r="1.1" fill="#1a1a1a"/><circle cx="14" cy="7.699999999999999" r="1.1" fill="#1a1a1a"/><circle cx="10" cy="1.4" r="1.1" fill="#1a1a1a"/><circle cx="6" cy="9.45" r="1.1" fill="#1a1a1a"/><circle cx="2" cy="3.15" r="1.1" fill="#1a1a1a"/><circle cx="39" cy="11.2" r="1.1" fill="#1a1a1a"/><circle cx="35" cy="4.8999999999999995" r="1.1" fill="#1a1a1a"/><circle cx="31" cy="12.95" r="1.1" fill="#1a1a1a"/><circle cx="27" cy="6.6499999999999995" r="1.1" fill="#1a1a1a"/><circle cx="23" cy="0.35" r="1.1" fill="#1a1a1a"/><circle cx="19" cy="8.399999999999999" r="1.1" fill="#1a1a1a"/><circle cx="15" cy="2.0999999999999996" r="1.1" fill="#1a1a1a"/><circle cx="11" cy="10.149999999999999" r="1.1" fill="#1a1a1a"/><circle cx="7" cy="3.8499999999999996" r="1.1" fill="#1a1a1a"/><circle cx="3" cy="11.899999999999999" r="1.1" fill="#1a1a1a"/><circle cx="40" cy="5.6" r="1.1" fill="#1a1a1a"/><circle cx="36" cy="13.649999999999999" r="1.1" fill="#1a1a1a"/><circle cx="32" cy="7.35" r="1.1" fill="#1a1a1a"/><circle cx="28" cy="1.0499999999999998" r="1.1" fill="#1a1a1a"/><circle cx="24" cy="9.1" r="1.1" fill="#1a1a1a"/><circle cx="20" cy="2.8" r="1.1" fill="#1a1a1a"/><circle cx="16" cy="10.85" r="1.1" fill="#1a1a1a"/><circle cx="12" cy="4.55" r="1.1" fill="#1a1a1a"/><circle cx="8" cy="12.6" r="1.1" fill="#1a1a1a"/><circle cx="4" cy="6.3" r="1.1" fill="#1a1a1a"/><circle cx="0" cy="0.0" r="1.1" fill="#1a1a1a"/><circle cx="37" cy="8.049999999999999" r="1.1" fill="#1a1a1a"/><circle cx="33" cy="1.75" r="1.1" fill="#1a1a1a"/><circle cx="29" cy="9.799999999999999" r="1.1" fill="#1a1a1a"/><circle cx="25" cy="3.5" r="1.1" fill="#1a1a1a"/><circle cx="21" cy="11.549999999999999" r="1.1" fill="#1a1a1a"/><circle cx="17" cy="5.25" r="1.1" fill="#1a1a1a"/><circle cx="13" cy="13.299999999999999" r="1.1" fill="#1a1a1a"/></svg>
<div class="a" style="left:96px;top:507px;width:22px;height:22px;background:#535353"></div>
<svg class="a" style="left:97px;top:508px" width="18" height="18" viewBox="0 0 18 18"><rect x="1" y="10" width="7" height="7" fill="#bbb"/><path d="M6 3h6l4 4v6h-6" stroke="#bbb" stroke-width="1.6" fill="none"/></svg>
<div class="a" style="left:126px;top:497px;color:#e0e0e0;font-size:14px;transform:scaleX(0.88);transform-origin:0 0;white-space:nowrap">Vector Smart Object co...</div>
<div class="a" style="left:43px;top:532px;width:243px;height:56px;background:#535353"></div>
<div class="a" style="left:0;top:587px;width:286px;height:2px;background:#3b3b3b"></div>
<svg class="a" style="left:11px;top:553px" width="20" height="14" viewBox="0 0 20 14"><path d="M1 7q9-10 18 0q-9 10-18 0z" fill="#a9a9a9"/><circle cx="10" cy="7" r="4" fill="#2a2a2a"/><circle cx="11.3" cy="5.6" r="1.3" fill="#bbb"/></svg>
<div class="a" style="left:71px;top:537px;width:45px;height:45px;border:2px solid #111;background:#fff;background-image:linear-gradient(45deg,#ccc 25%,transparent 25%,transparent 75%,#ccc 75%),linear-gradient(45deg,#ccc 25%,transparent 25%,transparent 75%,#ccc 75%);background-size:10px 10px,10px 10px;background-position:0 0,5px 5px"></div>
<svg class="a" style="left:73px;top:539px" width="41" height="41" viewBox="0 0 41 41"><circle cx="0" cy="0.0" r="1.1" fill="#1a1a1a"/><circle cx="33" cy="5.0" r="1.1" fill="#1a1a1a"/><circle cx="25" cy="10.0" r="1.1" fill="#1a1a1a"/><circle cx="17" cy="15.0" r="1.1" fill="#1a1a1a"/><circle cx="13" cy="38.0" r="1.1" fill="#1a1a1a"/><circle cx="9" cy="20.0" r="1.1" fill="#1a1a1a"/><circle cx="5" cy="2.0" r="1.1" fill="#1a1a1a"/><circle cx="1" cy="25.0" r="1.1" fill="#1a1a1a"/><circle cx="38" cy="7.0" r="1.1" fill="#1a1a1a"/><circle cx="30" cy="12.0" r="1.1" fill="#1a1a1a"/><circle cx="18" cy="40.0" r="1.1" fill="#1a1a1a"/><circle cx="14" cy="22.0" r="1.1" fill="#1a1a1a"/><circle cx="10" cy="4.0" r="1.1" fill="#1a1a1a"/><circle cx="6" cy="27.0" r="1.1" fill="#1a1a1a"/><circle cx="2" cy="9.0" r="1.1" fill="#1a1a1a"/><circle cx="35" cy="14.0" r="1.1" fill="#1a1a1a"/><circle cx="23" cy="1.0" r="1.1" fill="#1a1a1a"/><circle cx="19" cy="24.0" r="1.1" fill="#1a1a1a"/><circle cx="15" cy="6.0" r="1.1" fill="#1a1a1a"/><circle cx="11" cy="29.0" r="1.1" fill="#1a1a1a"/><circle cx="7" cy="11.0" r="1.1" fill="#1a1a1a"/><circle cx="3" cy="34.0" r="1.1" fill="#1a1a1a"/><circle cx="28" cy="3.0" r="1.1" fill="#1a1a1a"/><circle cx="20" cy="8.0" r="1.1" fill="#1a1a1a"/><circle cx="16" cy="31.0" r="1.1" fill="#1a1a1a"/><circle cx="12" cy="13.0" r="1.1" fill="#1a1a1a"/><circle cx="8" cy="36.0" r="1.1" fill="#1a1a1a"/><circle cx="4" cy="18.0" r="1.1" fill="#1a1a1a"/><circle cx="0" cy="0.0" r="1.1" fill="#1a1a1a"/><circle cx="33" cy="5.0" r="1.1" fill="#1a1a1a"/><circle cx="25" cy="10.0" r="1.1" fill="#1a1a1a"/><circle cx="17" cy="15.0" r="1.1" fill="#1a1a1a"/><circle cx="13" cy="38.0" r="1.1" fill="#1a1a1a"/><circle cx="9" cy="20.0" r="1.1" fill="#1a1a1a"/><circle cx="5" cy="2.0" r="1.1" fill="#1a1a1a"/><circle cx="1" cy="25.0" r="1.1" fill="#1a1a1a"/><circle cx="38" cy="7.0" r="1.1" fill="#1a1a1a"/><circle cx="30" cy="12.0" r="1.1" fill="#1a1a1a"/><circle cx="18" cy="40.0" r="1.1" fill="#1a1a1a"/><circle cx="14" cy="22.0" r="1.1" fill="#1a1a1a"/><circle cx="10" cy="4.0" r="1.1" fill="#1a1a1a"/><circle cx="6" cy="27.0" r="1.1" fill="#1a1a1a"/><circle cx="2" cy="9.0" r="1.1" fill="#1a1a1a"/><circle cx="35" cy="14.0" r="1.1" fill="#1a1a1a"/><circle cx="23" cy="1.0" r="1.1" fill="#1a1a1a"/><circle cx="19" cy="24.0" r="1.1" fill="#1a1a1a"/><circle cx="15" cy="6.0" r="1.1" fill="#1a1a1a"/><circle cx="11" cy="29.0" r="1.1" fill="#1a1a1a"/><circle cx="7" cy="11.0" r="1.1" fill="#1a1a1a"/><circle cx="3" cy="34.0" r="1.1" fill="#1a1a1a"/><circle cx="28" cy="3.0" r="1.1" fill="#1a1a1a"/><circle cx="20" cy="8.0" r="1.1" fill="#1a1a1a"/><circle cx="16" cy="31.0" r="1.1" fill="#1a1a1a"/><circle cx="12" cy="13.0" r="1.1" fill="#1a1a1a"/><circle cx="8" cy="36.0" r="1.1" fill="#1a1a1a"/><circle cx="4" cy="18.0" r="1.1" fill="#1a1a1a"/><circle cx="0" cy="0.0" r="1.1" fill="#1a1a1a"/><circle cx="33" cy="5.0" r="1.1" fill="#1a1a1a"/><circle cx="25" cy="10.0" r="1.1" fill="#1a1a1a"/><circle cx="17" cy="15.0" r="1.1" fill="#1a1a1a"/><circle cx="13" cy="38.0" r="1.1" fill="#1a1a1a"/></svg>
<div class="a" style="left:96px;top:562px;width:22px;height:22px;background:#535353"></div>
<svg class="a" style="left:97px;top:563px" width="18" height="18" viewBox="0 0 18 18"><rect x="1" y="10" width="7" height="7" fill="#bbb"/><path d="M6 3h6l4 4v6h-6" stroke="#bbb" stroke-width="1.6" fill="none"/></svg>
<div class="a" style="left:127px;top:552px;color:#eaeaea;font-size:14.3px;white-space:nowrap">Vector Smart Object</div>
<div class="a" style="left:43px;top:588px;width:243px;height:56px;background:#535353"></div>
<div class="a" style="left:0;top:643px;width:286px;height:2px;background:#3b3b3b"></div>
<div class="a" style="left:12px;top:608px;width:16px;height:16px;border:1px solid #3c3c3c;background:#4e4e4e"></div>
<div class="a" style="left:71px;top:605px;width:46px;height:30px;border:2px solid #111;background:#fff;background-image:linear-gradient(45deg,#ccc 25%,transparent 25%,transparent 75%,#ccc 75%),linear-gradient(45deg,#ccc 25%,transparent 25%,transparent 75%,#ccc 75%);background-size:10px 10px;background-position:0 0,5px 5px"></div>
<div class="a" style="left:130px;top:606px;color:#ddd;font-size:14px;white-space:nowrap">Vector Smart Object f...</div>
<div class="a" style="left:270px;top:588px;width:16px;height:28px;background:linear-gradient(#c0c0c0,#8a8a8a)"></div>
<div class="a" style="left:43px;top:0;width:1px;height:617px;background:#3b3b3b"></div>
<div class="a" style="left:286px;top:0;width:21px;height:617px;background:#424242"></div>
<div class="a" style="left:290px;top:5px;width:13px;height:406px;border-radius:7px;background:linear-gradient(90deg,#6a6a6a,#9a9a9a 50%,#767676)"></div>
</div>
<div class="a" style="left:0;top:780px;width:307px;height:29px;background:#4a4a4a;border-top:1px solid #3a3a3a"></div>
<svg class="a" style="left:0;top:780px" width="307" height="29" viewBox="0 0 307 29"><rect x="19" y="10" width="12" height="8" rx="4" stroke="#7a7a7a" stroke-width="2.2" fill="none"/><rect x="25" y="10" width="12" height="8" rx="4" stroke="#7a7a7a" stroke-width="2.2" fill="none"/><text x="58" y="22" font-family="Liberation Serif" font-style="italic" font-size="19" fill="#7a7a7a">fx</text><rect x="96" y="7" width="20" height="15" fill="#7a7a7a"/><circle cx="106" cy="14.5" r="4" fill="#4a4a4a"/><circle cx="144" cy="14" r="8" fill="#7a7a7a"/><path d="M139 19l10-10" stroke="#4a4a4a" stroke-width="1.6"/><path d="M172 7h7l2 2h9v13h-18z" fill="#7a7a7a"/><path d="M212 8h14v14h-9v-6h-5z" fill="#7a7a7a"/><path d="M249 9h14M252 9v13h8V9M254 9V6h4v3" stroke="#7a7a7a" stroke-width="2" fill="none"/><path d="M290 26l10-10v10z" fill="#5e5e5e"/></svg>
<div class="a" style="left:0;top:809px;width:307px;height:10px;background:#474747;border-top:1px solid #3a3a3a"></div>
<div class="a" style="left:139px;top:812px;width:28px;height:5px;background:repeating-linear-gradient(90deg,#222 0 1px,transparent 1px 3px)"></div>
</div>
<!--/LAYERS-->
</body></html>
